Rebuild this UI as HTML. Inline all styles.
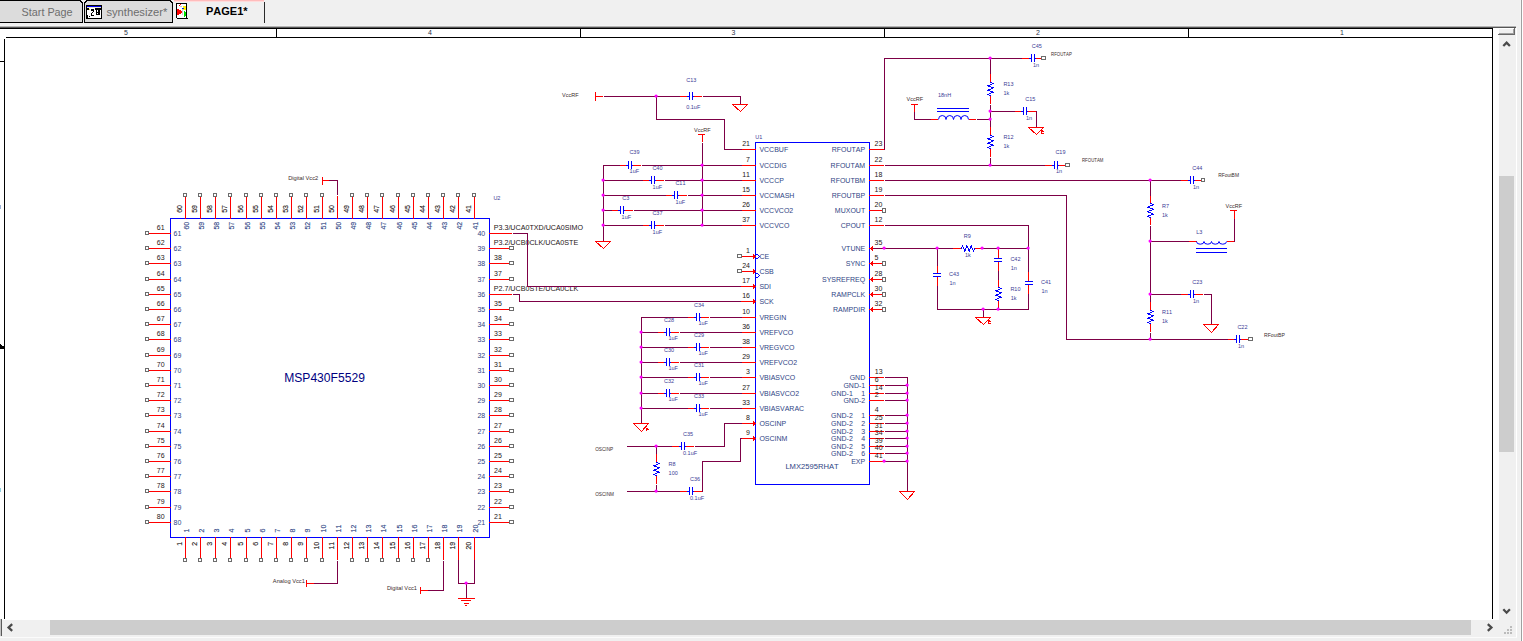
<!DOCTYPE html>
<html><head><meta charset="utf-8"><title>PAGE1</title>
<style>
html,body{margin:0;padding:0;background:#f0f0f0;overflow:hidden}
svg{display:block;font-family:"Liberation Sans",sans-serif;font-kerning:none}
#s path,#s rect{shape-rendering:crispEdges}
text{white-space:pre}
</style></head>
<body>
<svg width="1523" height="641" viewBox="0 0 1523 641">
<rect width="1523" height="641" fill="#f0f0f0"/>
<g id="c" shape-rendering="crispEdges">
<rect x="0" y="28" width="1499" height="592" fill="#fff"/>
<rect x="0" y="25" width="1516" height="1" fill="#f4f4f4"/>
<rect x="0" y="26" width="1516" height="1" fill="#b4b4b4"/>
<rect x="0" y="27" width="1516" height="1" fill="#555"/>
<rect x="0" y="28" width="1493" height="1" fill="#000"/>
<rect x="6" y="37" width="1487" height="1" fill="#000"/>
<rect x="1492" y="28" width="1" height="591" fill="#000"/>
<rect x="4" y="39" width="1" height="580" fill="#000"/>
<rect x="276" y="28" width="1" height="9" fill="#000"/>
<rect x="580" y="28" width="1" height="9" fill="#000"/>
<rect x="884" y="28" width="1" height="9" fill="#000"/>
<rect x="1188" y="28" width="1" height="9" fill="#000"/>
<text x="126" y="35.2" font-size="7" fill="#2c3448" text-anchor="middle">5</text>
<text x="430" y="35.2" font-size="7" fill="#2c3448" text-anchor="middle">4</text>
<text x="733.5" y="35.2" font-size="7" fill="#2c3448" text-anchor="middle">3</text>
<text x="1038" y="35.2" font-size="7" fill="#2c3448" text-anchor="middle">2</text>
<text x="1342" y="35.2" font-size="7" fill="#2c3448" text-anchor="middle">1</text>
<rect x="0" y="61" width="4" height="1" fill="#000"/>
<path d="M0 344h1v1h1v1h2v3h-4z" fill="#000"/>
<rect x="0" y="205" width="1" height="4" fill="#9fb4d8"/>
<rect x="0" y="488" width="1" height="4" fill="#8fd0e0"/>
<path d="M0 .5H80L82.5 3V22.5H0" fill="#dcdcdc" stroke="#000"/>
<path d="M87 .5H170L172.5 3V22.5H84.5V3z" fill="#dcdcdc" stroke="#000"/>
<rect x="174" y="0" width="90" height="1" fill="#ffbcbc"/>
<rect x="174" y="1" width="90" height="1" fill="#ffdcdc"/>
<rect x="264" y="2" width="1" height="21" fill="#2a2a2a"/>
<text x="21.6" y="16" font-size="10.8" fill="#6e6e6e">Start Page</text>
<text x="106.4" y="16" font-size="11.2" fill="#6e6e6e">synthesizer*</text>
<text x="206" y="15.4" font-size="11" font-weight="bold" fill="#000">PAGE1*</text>
<rect x="86" y="5" width="16" height="14" fill="#000"/>
<rect x="87" y="6" width="14" height="1" fill="#0000f0"/>
<rect x="87" y="7" width="14" height="1" fill="#e8e8d8"/>
<rect x="87" y="8" width="14" height="10" fill="#fff"/>
<path d="M87 8h2v2h-2zM91 9h3v3h-1v1h-1v2h2v1h-3v-3h1v-1h1v-1h-2zM95 8h6v2h-1v5h-4v-5h-1zM89 16h1v1h-1zM87 15h1v3h-1z" fill="#000"/>
<rect x="97" y="10" width="1" height="2" fill="#fff"/>
<rect x="97" y="13" width="1" height="1" fill="#fff"/>
<rect x="89" y="9" width="1" height="1" fill="#f0e000"/>
<rect x="176" y="3" width="11" height="15" fill="#000"/>
<rect x="177" y="4" width="9" height="14" fill="#fff"/>
<rect x="177" y="18" width="11" height="1" fill="#000"/>
<path d="M177 9h2v1h2v1h1v2h-1v1h-2v1h-2z" fill="#ff0000"/>
<rect x="180" y="4" width="1" height="1" fill="#ff0000"/>
<rect x="179" y="5" width="1" height="1" fill="#ff0000"/>
<rect x="180" y="6" width="2" height="1" fill="#c8c8c8"/>
<rect x="182" y="9" width="1" height="6" fill="#d0d0d0"/>
<rect x="183" y="6" width="3" height="4" fill="#ffee00"/>
<rect x="182" y="8" width="2" height="1" fill="#0020ff"/>
<path d="M184 11h1v1h1v4h-1v1h-1z" fill="#00e000"/>
<rect x="1499" y="36" width="17" height="584" fill="#f0f0f0"/>
<rect x="1516" y="28" width="1" height="610" fill="#fff"/>
<rect x="1522" y="0" width="1" height="641" fill="#fff"/>
<rect x="1499" y="176" width="15" height="276" fill="#cdcdcd"/>
<rect x="1521" y="0" width="1" height="641" fill="#a0a0a0"/>
<rect x="1520" y="0" width="1" height="641" fill="#f5f5f5"/>
<rect x="1498" y="28" width="17" height="7" fill="#f0f0f0"/>
<rect x="1498" y="28" width="16" height="1" fill="#fff"/>
<rect x="1498" y="28" width="1" height="6" fill="#fff"/>
<rect x="1499" y="33" width="15" height="1" fill="#a0a0a0"/>
<rect x="1513" y="29" width="1" height="5" fill="#a0a0a0"/>
<rect x="1498" y="34" width="17" height="1" fill="#696969"/>
<rect x="1514" y="28" width="1" height="7" fill="#696969"/>
<path d="M1503.3 46L1506.6 42.6L1509.9 46" fill="none" stroke="#4a4a4a" stroke-width="2.3" style="shape-rendering:auto"/>
<path d="M1503.3 609.3L1506.6 612.7L1509.9 609.3" fill="none" stroke="#4a4a4a" stroke-width="2.3" style="shape-rendering:auto"/>
<rect x="0" y="620" width="1499" height="17" fill="#f0f0f0"/>
<rect x="50" y="620" width="1421" height="15" fill="#cdcdcd"/>
<rect x="0" y="619" width="1" height="17" fill="#c4c4c4"/>
<rect x="1" y="619" width="1" height="17" fill="#5a5a5a"/>
<path d="M12.2 624.2L8.6 627.5L12.2 630.8" fill="none" stroke="#4a4a4a" stroke-width="2.3" style="shape-rendering:auto"/>
<path d="M1487.8 624.2L1491.4 627.5L1487.8 630.8" fill="none" stroke="#4a4a4a" stroke-width="2.3" style="shape-rendering:auto"/>
<rect x="0" y="637" width="1517" height="1" fill="#fbfbfb"/>
<rect x="1510" y="626" width="2" height="2" fill="#bcbcbc"/>
<rect x="1510" y="629" width="2" height="2" fill="#bcbcbc"/>
<rect x="1510" y="632" width="2" height="2" fill="#bcbcbc"/>
<rect x="1507" y="629" width="2" height="2" fill="#bcbcbc"/>
<rect x="1507" y="632" width="2" height="2" fill="#bcbcbc"/>
<rect x="1504" y="632" width="2" height="2" fill="#bcbcbc"/>
</g>
<g id="s" stroke-width="1">
<rect x="170.5" y="218.5" width="319" height="319" fill="none" stroke="#0000ff"/>
<path d="M149 233.5L171 233.5" stroke="#ff0000"/>
<rect x="145.5" y="231.5" width="3" height="3" fill="#fff" stroke="#6c6c6c"/>
<text x="164.6" y="230" font-size="7" fill="#1e1616" text-anchor="end">61</text>
<text x="173.6" y="236.2" font-size="7" fill="#2f4585">61</text>
<path d="M489 233.5L512 233.5" stroke="#ff0000"/>
<text x="485.2" y="236.2" font-size="7" fill="#2f4585" text-anchor="end">40</text>
<text x="493.7" y="230" font-size="7.15" fill="#1e1616">P3.3/UCA0TXD/UCA0SIMO</text>
<path d="M149 248.5L171 248.5" stroke="#ff0000"/>
<rect x="145.5" y="246.5" width="3" height="3" fill="#fff" stroke="#6c6c6c"/>
<text x="164.6" y="245" font-size="7" fill="#1e1616" text-anchor="end">62</text>
<text x="173.6" y="251.2" font-size="7" fill="#2f4585">62</text>
<path d="M489 248.5L509 248.5" stroke="#ff0000"/>
<rect x="509.5" y="246.5" width="4" height="3" fill="#fff" stroke="#6c6c6c"/>
<text x="485.2" y="251.2" font-size="7" fill="#2f4585" text-anchor="end">39</text>
<text x="493.7" y="245" font-size="7.15" fill="#1e1616">P3.2/UCB0CLK/UCA0STE</text>
<path d="M149 263.5L171 263.5" stroke="#ff0000"/>
<rect x="145.5" y="261.5" width="3" height="3" fill="#fff" stroke="#6c6c6c"/>
<text x="164.6" y="260" font-size="7" fill="#1e1616" text-anchor="end">63</text>
<text x="173.6" y="266.2" font-size="7" fill="#2f4585">63</text>
<path d="M489 263.5L509 263.5" stroke="#ff0000"/>
<rect x="509.5" y="261.5" width="4" height="3" fill="#fff" stroke="#6c6c6c"/>
<text x="485.2" y="266.2" font-size="7" fill="#2f4585" text-anchor="end">38</text>
<text x="494" y="260" font-size="7" fill="#1e1616">38</text>
<path d="M149 279.5L171 279.5" stroke="#ff0000"/>
<rect x="145.5" y="277.5" width="3" height="3" fill="#fff" stroke="#6c6c6c"/>
<text x="164.6" y="276" font-size="7" fill="#1e1616" text-anchor="end">64</text>
<text x="173.6" y="282.2" font-size="7" fill="#2f4585">64</text>
<path d="M489 279.5L509 279.5" stroke="#ff0000"/>
<rect x="509.5" y="277.5" width="4" height="3" fill="#fff" stroke="#6c6c6c"/>
<text x="485.2" y="282.2" font-size="7" fill="#2f4585" text-anchor="end">37</text>
<text x="494" y="276" font-size="7" fill="#1e1616">37</text>
<path d="M149 294.5L171 294.5" stroke="#ff0000"/>
<rect x="145.5" y="292.5" width="3" height="3" fill="#fff" stroke="#6c6c6c"/>
<text x="164.6" y="291" font-size="7" fill="#1e1616" text-anchor="end">65</text>
<text x="173.6" y="297.2" font-size="7" fill="#2f4585">65</text>
<path d="M489 294.5L512 294.5" stroke="#ff0000"/>
<text x="485.2" y="297.2" font-size="7" fill="#2f4585" text-anchor="end">36</text>
<text x="493.7" y="291" font-size="7.15" fill="#1e1616">P2.7/UCB0STE/UCA0CLK</text>
<path d="M149 309.5L171 309.5" stroke="#ff0000"/>
<rect x="145.5" y="307.5" width="3" height="3" fill="#fff" stroke="#6c6c6c"/>
<text x="164.6" y="306" font-size="7" fill="#1e1616" text-anchor="end">66</text>
<text x="173.6" y="312.2" font-size="7" fill="#2f4585">66</text>
<path d="M489 309.5L509 309.5" stroke="#ff0000"/>
<rect x="509.5" y="307.5" width="4" height="3" fill="#fff" stroke="#6c6c6c"/>
<text x="485.2" y="312.2" font-size="7" fill="#2f4585" text-anchor="end">35</text>
<text x="494" y="306" font-size="7" fill="#1e1616">35</text>
<path d="M149 324.5L171 324.5" stroke="#ff0000"/>
<rect x="145.5" y="322.5" width="3" height="3" fill="#fff" stroke="#6c6c6c"/>
<text x="164.6" y="321" font-size="7" fill="#1e1616" text-anchor="end">67</text>
<text x="173.6" y="327.2" font-size="7" fill="#2f4585">67</text>
<path d="M489 324.5L509 324.5" stroke="#ff0000"/>
<rect x="509.5" y="322.5" width="4" height="3" fill="#fff" stroke="#6c6c6c"/>
<text x="485.2" y="327.2" font-size="7" fill="#2f4585" text-anchor="end">34</text>
<text x="494" y="321" font-size="7" fill="#1e1616">34</text>
<path d="M149 339.5L171 339.5" stroke="#ff0000"/>
<rect x="145.5" y="337.5" width="3" height="3" fill="#fff" stroke="#6c6c6c"/>
<text x="164.6" y="336" font-size="7" fill="#1e1616" text-anchor="end">68</text>
<text x="173.6" y="342.2" font-size="7" fill="#2f4585">68</text>
<path d="M489 339.5L509 339.5" stroke="#ff0000"/>
<rect x="509.5" y="337.5" width="4" height="3" fill="#fff" stroke="#6c6c6c"/>
<text x="485.2" y="342.2" font-size="7" fill="#2f4585" text-anchor="end">33</text>
<text x="494" y="336" font-size="7" fill="#1e1616">33</text>
<path d="M149 355.5L171 355.5" stroke="#ff0000"/>
<rect x="145.5" y="353.5" width="3" height="3" fill="#fff" stroke="#6c6c6c"/>
<text x="164.6" y="352" font-size="7" fill="#1e1616" text-anchor="end">69</text>
<text x="173.6" y="358.2" font-size="7" fill="#2f4585">69</text>
<path d="M489 355.5L509 355.5" stroke="#ff0000"/>
<rect x="509.5" y="353.5" width="4" height="3" fill="#fff" stroke="#6c6c6c"/>
<text x="485.2" y="358.2" font-size="7" fill="#2f4585" text-anchor="end">32</text>
<text x="494" y="352" font-size="7" fill="#1e1616">32</text>
<path d="M149 370.5L171 370.5" stroke="#ff0000"/>
<rect x="145.5" y="368.5" width="3" height="3" fill="#fff" stroke="#6c6c6c"/>
<text x="164.6" y="367" font-size="7" fill="#1e1616" text-anchor="end">70</text>
<text x="173.6" y="373.2" font-size="7" fill="#2f4585">70</text>
<path d="M489 370.5L509 370.5" stroke="#ff0000"/>
<rect x="509.5" y="368.5" width="4" height="3" fill="#fff" stroke="#6c6c6c"/>
<text x="485.2" y="373.2" font-size="7" fill="#2f4585" text-anchor="end">31</text>
<text x="494" y="367" font-size="7" fill="#1e1616">31</text>
<path d="M149 385.5L171 385.5" stroke="#ff0000"/>
<rect x="145.5" y="383.5" width="3" height="3" fill="#fff" stroke="#6c6c6c"/>
<text x="164.6" y="382" font-size="7" fill="#1e1616" text-anchor="end">71</text>
<text x="173.6" y="388.2" font-size="7" fill="#2f4585">71</text>
<path d="M489 385.5L509 385.5" stroke="#ff0000"/>
<rect x="509.5" y="383.5" width="4" height="3" fill="#fff" stroke="#6c6c6c"/>
<text x="485.2" y="388.2" font-size="7" fill="#2f4585" text-anchor="end">30</text>
<text x="494" y="382" font-size="7" fill="#1e1616">30</text>
<path d="M149 400.5L171 400.5" stroke="#ff0000"/>
<rect x="145.5" y="398.5" width="3" height="3" fill="#fff" stroke="#6c6c6c"/>
<text x="164.6" y="397" font-size="7" fill="#1e1616" text-anchor="end">72</text>
<text x="173.6" y="403.2" font-size="7" fill="#2f4585">72</text>
<path d="M489 400.5L509 400.5" stroke="#ff0000"/>
<rect x="509.5" y="398.5" width="4" height="3" fill="#fff" stroke="#6c6c6c"/>
<text x="485.2" y="403.2" font-size="7" fill="#2f4585" text-anchor="end">29</text>
<text x="494" y="397" font-size="7" fill="#1e1616">29</text>
<path d="M149 415.5L171 415.5" stroke="#ff0000"/>
<rect x="145.5" y="413.5" width="3" height="3" fill="#fff" stroke="#6c6c6c"/>
<text x="164.6" y="412" font-size="7" fill="#1e1616" text-anchor="end">73</text>
<text x="173.6" y="418.2" font-size="7" fill="#2f4585">73</text>
<path d="M489 415.5L509 415.5" stroke="#ff0000"/>
<rect x="509.5" y="413.5" width="4" height="3" fill="#fff" stroke="#6c6c6c"/>
<text x="485.2" y="418.2" font-size="7" fill="#2f4585" text-anchor="end">28</text>
<text x="494" y="412" font-size="7" fill="#1e1616">28</text>
<path d="M149 431.5L171 431.5" stroke="#ff0000"/>
<rect x="145.5" y="429.5" width="3" height="3" fill="#fff" stroke="#6c6c6c"/>
<text x="164.6" y="428" font-size="7" fill="#1e1616" text-anchor="end">74</text>
<text x="173.6" y="434.2" font-size="7" fill="#2f4585">74</text>
<path d="M489 431.5L509 431.5" stroke="#ff0000"/>
<rect x="509.5" y="429.5" width="4" height="3" fill="#fff" stroke="#6c6c6c"/>
<text x="485.2" y="434.2" font-size="7" fill="#2f4585" text-anchor="end">27</text>
<text x="494" y="428" font-size="7" fill="#1e1616">27</text>
<path d="M149 446.5L171 446.5" stroke="#ff0000"/>
<rect x="145.5" y="444.5" width="3" height="3" fill="#fff" stroke="#6c6c6c"/>
<text x="164.6" y="443" font-size="7" fill="#1e1616" text-anchor="end">75</text>
<text x="173.6" y="449.2" font-size="7" fill="#2f4585">75</text>
<path d="M489 446.5L509 446.5" stroke="#ff0000"/>
<rect x="509.5" y="444.5" width="4" height="3" fill="#fff" stroke="#6c6c6c"/>
<text x="485.2" y="449.2" font-size="7" fill="#2f4585" text-anchor="end">26</text>
<text x="494" y="443" font-size="7" fill="#1e1616">26</text>
<path d="M149 461.5L171 461.5" stroke="#ff0000"/>
<rect x="145.5" y="459.5" width="3" height="3" fill="#fff" stroke="#6c6c6c"/>
<text x="164.6" y="458" font-size="7" fill="#1e1616" text-anchor="end">76</text>
<text x="173.6" y="464.2" font-size="7" fill="#2f4585">76</text>
<path d="M489 461.5L509 461.5" stroke="#ff0000"/>
<rect x="509.5" y="459.5" width="4" height="3" fill="#fff" stroke="#6c6c6c"/>
<text x="485.2" y="464.2" font-size="7" fill="#2f4585" text-anchor="end">25</text>
<text x="494" y="458" font-size="7" fill="#1e1616">25</text>
<path d="M149 476.5L171 476.5" stroke="#ff0000"/>
<rect x="145.5" y="474.5" width="3" height="3" fill="#fff" stroke="#6c6c6c"/>
<text x="164.6" y="473" font-size="7" fill="#1e1616" text-anchor="end">77</text>
<text x="173.6" y="479.2" font-size="7" fill="#2f4585">77</text>
<path d="M489 476.5L509 476.5" stroke="#ff0000"/>
<rect x="509.5" y="474.5" width="4" height="3" fill="#fff" stroke="#6c6c6c"/>
<text x="485.2" y="479.2" font-size="7" fill="#2f4585" text-anchor="end">24</text>
<text x="494" y="473" font-size="7" fill="#1e1616">24</text>
<path d="M149 491.5L171 491.5" stroke="#ff0000"/>
<rect x="145.5" y="489.5" width="3" height="3" fill="#fff" stroke="#6c6c6c"/>
<text x="164.6" y="488" font-size="7" fill="#1e1616" text-anchor="end">78</text>
<text x="173.6" y="494.2" font-size="7" fill="#2f4585">78</text>
<path d="M489 491.5L509 491.5" stroke="#ff0000"/>
<rect x="509.5" y="489.5" width="4" height="3" fill="#fff" stroke="#6c6c6c"/>
<text x="485.2" y="494.2" font-size="7" fill="#2f4585" text-anchor="end">23</text>
<text x="494" y="488" font-size="7" fill="#1e1616">23</text>
<path d="M149 507.5L171 507.5" stroke="#ff0000"/>
<rect x="145.5" y="505.5" width="3" height="3" fill="#fff" stroke="#6c6c6c"/>
<text x="164.6" y="504" font-size="7" fill="#1e1616" text-anchor="end">79</text>
<text x="173.6" y="510.2" font-size="7" fill="#2f4585">79</text>
<path d="M489 507.5L509 507.5" stroke="#ff0000"/>
<rect x="509.5" y="505.5" width="4" height="3" fill="#fff" stroke="#6c6c6c"/>
<text x="485.2" y="510.2" font-size="7" fill="#2f4585" text-anchor="end">22</text>
<text x="494" y="504" font-size="7" fill="#1e1616">22</text>
<path d="M149 522.5L171 522.5" stroke="#ff0000"/>
<rect x="145.5" y="520.5" width="3" height="3" fill="#fff" stroke="#6c6c6c"/>
<text x="164.6" y="519" font-size="7" fill="#1e1616" text-anchor="end">80</text>
<text x="173.6" y="525.2" font-size="7" fill="#2f4585">80</text>
<path d="M489 522.5L509 522.5" stroke="#ff0000"/>
<rect x="509.5" y="520.5" width="4" height="3" fill="#fff" stroke="#6c6c6c"/>
<text x="485.2" y="525.2" font-size="7" fill="#2f4585" text-anchor="end">21</text>
<text x="494" y="519" font-size="7" fill="#1e1616">21</text>
<path d="M185.5 197L185.5 219" stroke="#ff0000"/>
<rect x="183.5" y="193.5" width="3" height="3" fill="#fff" stroke="#6c6c6c"/>
<text x="181.8" y="212.8" font-size="7" fill="#1e1616" transform="rotate(-90 181.8 212.8)" stroke="#1e1616" stroke-width=".12">60</text>
<text x="188.6" y="229.6" font-size="7" fill="#2f4585" transform="rotate(-90 188.6 229.6)" stroke="#2f4585" stroke-width=".12">60</text>
<path d="M185.5 537L185.5 558" stroke="#ff0000"/>
<rect x="183.5" y="558.5" width="3" height="3" fill="#fff" stroke="#6c6c6c"/>
<text x="181.8" y="541.8" font-size="7" fill="#1e1616" text-anchor="end" transform="rotate(-90 181.8 541.8)" stroke="#1e1616" stroke-width=".12">1</text>
<text x="188.6" y="532.4" font-size="7" fill="#2f4585" transform="rotate(-90 188.6 532.4)" stroke="#2f4585" stroke-width=".12">1</text>
<path d="M200.5 197L200.5 219" stroke="#ff0000"/>
<rect x="198.5" y="193.5" width="3" height="3" fill="#fff" stroke="#6c6c6c"/>
<text x="196.8" y="212.8" font-size="7" fill="#1e1616" transform="rotate(-90 196.8 212.8)" stroke="#1e1616" stroke-width=".12">59</text>
<text x="203.6" y="229.6" font-size="7" fill="#2f4585" transform="rotate(-90 203.6 229.6)" stroke="#2f4585" stroke-width=".12">59</text>
<path d="M200.5 537L200.5 558" stroke="#ff0000"/>
<rect x="198.5" y="558.5" width="3" height="3" fill="#fff" stroke="#6c6c6c"/>
<text x="196.8" y="541.8" font-size="7" fill="#1e1616" text-anchor="end" transform="rotate(-90 196.8 541.8)" stroke="#1e1616" stroke-width=".12">2</text>
<text x="203.6" y="532.4" font-size="7" fill="#2f4585" transform="rotate(-90 203.6 532.4)" stroke="#2f4585" stroke-width=".12">2</text>
<path d="M215.5 197L215.5 219" stroke="#ff0000"/>
<rect x="213.5" y="193.5" width="3" height="3" fill="#fff" stroke="#6c6c6c"/>
<text x="211.8" y="212.8" font-size="7" fill="#1e1616" transform="rotate(-90 211.8 212.8)" stroke="#1e1616" stroke-width=".12">58</text>
<text x="218.6" y="229.6" font-size="7" fill="#2f4585" transform="rotate(-90 218.6 229.6)" stroke="#2f4585" stroke-width=".12">58</text>
<path d="M215.5 537L215.5 558" stroke="#ff0000"/>
<rect x="213.5" y="558.5" width="3" height="3" fill="#fff" stroke="#6c6c6c"/>
<text x="211.8" y="541.8" font-size="7" fill="#1e1616" text-anchor="end" transform="rotate(-90 211.8 541.8)" stroke="#1e1616" stroke-width=".12">3</text>
<text x="218.6" y="532.4" font-size="7" fill="#2f4585" transform="rotate(-90 218.6 532.4)" stroke="#2f4585" stroke-width=".12">3</text>
<path d="M230.5 197L230.5 219" stroke="#ff0000"/>
<rect x="228.5" y="193.5" width="3" height="3" fill="#fff" stroke="#6c6c6c"/>
<text x="226.8" y="212.8" font-size="7" fill="#1e1616" transform="rotate(-90 226.8 212.8)" stroke="#1e1616" stroke-width=".12">57</text>
<text x="233.6" y="229.6" font-size="7" fill="#2f4585" transform="rotate(-90 233.6 229.6)" stroke="#2f4585" stroke-width=".12">57</text>
<path d="M230.5 537L230.5 558" stroke="#ff0000"/>
<rect x="228.5" y="558.5" width="3" height="3" fill="#fff" stroke="#6c6c6c"/>
<text x="226.8" y="541.8" font-size="7" fill="#1e1616" text-anchor="end" transform="rotate(-90 226.8 541.8)" stroke="#1e1616" stroke-width=".12">4</text>
<text x="233.6" y="532.4" font-size="7" fill="#2f4585" transform="rotate(-90 233.6 532.4)" stroke="#2f4585" stroke-width=".12">4</text>
<path d="M246.5 197L246.5 219" stroke="#ff0000"/>
<rect x="244.5" y="193.5" width="3" height="3" fill="#fff" stroke="#6c6c6c"/>
<text x="242.8" y="212.8" font-size="7" fill="#1e1616" transform="rotate(-90 242.8 212.8)" stroke="#1e1616" stroke-width=".12">56</text>
<text x="249.6" y="229.6" font-size="7" fill="#2f4585" transform="rotate(-90 249.6 229.6)" stroke="#2f4585" stroke-width=".12">56</text>
<path d="M246.5 537L246.5 558" stroke="#ff0000"/>
<rect x="244.5" y="558.5" width="3" height="3" fill="#fff" stroke="#6c6c6c"/>
<text x="242.8" y="541.8" font-size="7" fill="#1e1616" text-anchor="end" transform="rotate(-90 242.8 541.8)" stroke="#1e1616" stroke-width=".12">5</text>
<text x="249.6" y="532.4" font-size="7" fill="#2f4585" transform="rotate(-90 249.6 532.4)" stroke="#2f4585" stroke-width=".12">5</text>
<path d="M261.5 197L261.5 219" stroke="#ff0000"/>
<rect x="259.5" y="193.5" width="3" height="3" fill="#fff" stroke="#6c6c6c"/>
<text x="257.8" y="212.8" font-size="7" fill="#1e1616" transform="rotate(-90 257.8 212.8)" stroke="#1e1616" stroke-width=".12">55</text>
<text x="264.6" y="229.6" font-size="7" fill="#2f4585" transform="rotate(-90 264.6 229.6)" stroke="#2f4585" stroke-width=".12">55</text>
<path d="M261.5 537L261.5 558" stroke="#ff0000"/>
<rect x="259.5" y="558.5" width="3" height="3" fill="#fff" stroke="#6c6c6c"/>
<text x="257.8" y="541.8" font-size="7" fill="#1e1616" text-anchor="end" transform="rotate(-90 257.8 541.8)" stroke="#1e1616" stroke-width=".12">6</text>
<text x="264.6" y="532.4" font-size="7" fill="#2f4585" transform="rotate(-90 264.6 532.4)" stroke="#2f4585" stroke-width=".12">6</text>
<path d="M276.5 197L276.5 219" stroke="#ff0000"/>
<rect x="274.5" y="193.5" width="3" height="3" fill="#fff" stroke="#6c6c6c"/>
<text x="272.8" y="212.8" font-size="7" fill="#1e1616" transform="rotate(-90 272.8 212.8)" stroke="#1e1616" stroke-width=".12">54</text>
<text x="279.6" y="229.6" font-size="7" fill="#2f4585" transform="rotate(-90 279.6 229.6)" stroke="#2f4585" stroke-width=".12">54</text>
<path d="M276.5 537L276.5 558" stroke="#ff0000"/>
<rect x="274.5" y="558.5" width="3" height="3" fill="#fff" stroke="#6c6c6c"/>
<text x="272.8" y="541.8" font-size="7" fill="#1e1616" text-anchor="end" transform="rotate(-90 272.8 541.8)" stroke="#1e1616" stroke-width=".12">7</text>
<text x="279.6" y="532.4" font-size="7" fill="#2f4585" transform="rotate(-90 279.6 532.4)" stroke="#2f4585" stroke-width=".12">7</text>
<path d="M291.5 197L291.5 219" stroke="#ff0000"/>
<rect x="289.5" y="193.5" width="3" height="3" fill="#fff" stroke="#6c6c6c"/>
<text x="287.8" y="212.8" font-size="7" fill="#1e1616" transform="rotate(-90 287.8 212.8)" stroke="#1e1616" stroke-width=".12">53</text>
<text x="294.6" y="229.6" font-size="7" fill="#2f4585" transform="rotate(-90 294.6 229.6)" stroke="#2f4585" stroke-width=".12">53</text>
<path d="M291.5 537L291.5 558" stroke="#ff0000"/>
<rect x="289.5" y="558.5" width="3" height="3" fill="#fff" stroke="#6c6c6c"/>
<text x="287.8" y="541.8" font-size="7" fill="#1e1616" text-anchor="end" transform="rotate(-90 287.8 541.8)" stroke="#1e1616" stroke-width=".12">8</text>
<text x="294.6" y="532.4" font-size="7" fill="#2f4585" transform="rotate(-90 294.6 532.4)" stroke="#2f4585" stroke-width=".12">8</text>
<path d="M306.5 197L306.5 219" stroke="#ff0000"/>
<rect x="304.5" y="193.5" width="3" height="3" fill="#fff" stroke="#6c6c6c"/>
<text x="302.8" y="212.8" font-size="7" fill="#1e1616" transform="rotate(-90 302.8 212.8)" stroke="#1e1616" stroke-width=".12">52</text>
<text x="309.6" y="229.6" font-size="7" fill="#2f4585" transform="rotate(-90 309.6 229.6)" stroke="#2f4585" stroke-width=".12">52</text>
<path d="M306.5 537L306.5 558" stroke="#ff0000"/>
<rect x="304.5" y="558.5" width="3" height="3" fill="#fff" stroke="#6c6c6c"/>
<text x="302.8" y="541.8" font-size="7" fill="#1e1616" text-anchor="end" transform="rotate(-90 302.8 541.8)" stroke="#1e1616" stroke-width=".12">9</text>
<text x="309.6" y="532.4" font-size="7" fill="#2f4585" transform="rotate(-90 309.6 532.4)" stroke="#2f4585" stroke-width=".12">9</text>
<path d="M322.5 197L322.5 219" stroke="#ff0000"/>
<rect x="320.5" y="193.5" width="3" height="3" fill="#fff" stroke="#6c6c6c"/>
<text x="318.8" y="212.8" font-size="7" fill="#1e1616" transform="rotate(-90 318.8 212.8)" stroke="#1e1616" stroke-width=".12">51</text>
<text x="325.6" y="229.6" font-size="7" fill="#2f4585" transform="rotate(-90 325.6 229.6)" stroke="#2f4585" stroke-width=".12">51</text>
<path d="M322.5 537L322.5 558" stroke="#ff0000"/>
<rect x="320.5" y="558.5" width="3" height="3" fill="#fff" stroke="#6c6c6c"/>
<text x="318.8" y="541.8" font-size="7" fill="#1e1616" text-anchor="end" transform="rotate(-90 318.8 541.8)" stroke="#1e1616" stroke-width=".12">10</text>
<text x="325.6" y="532.4" font-size="7" fill="#2f4585" transform="rotate(-90 325.6 532.4)" stroke="#2f4585" stroke-width=".12">10</text>
<path d="M337.5 196L337.5 219" stroke="#ff0000"/>
<text x="333.8" y="212.8" font-size="7" fill="#1e1616" transform="rotate(-90 333.8 212.8)" stroke="#1e1616" stroke-width=".12">50</text>
<text x="340.6" y="229.6" font-size="7" fill="#2f4585" transform="rotate(-90 340.6 229.6)" stroke="#2f4585" stroke-width=".12">50</text>
<path d="M337.5 537L337.5 560" stroke="#ff0000"/>
<text x="333.8" y="541.8" font-size="7" fill="#1e1616" text-anchor="end" transform="rotate(-90 333.8 541.8)" stroke="#1e1616" stroke-width=".12">11</text>
<text x="340.6" y="532.4" font-size="7" fill="#2f4585" transform="rotate(-90 340.6 532.4)" stroke="#2f4585" stroke-width=".12">11</text>
<path d="M352.5 197L352.5 219" stroke="#ff0000"/>
<rect x="350.5" y="193.5" width="3" height="3" fill="#fff" stroke="#6c6c6c"/>
<text x="348.8" y="212.8" font-size="7" fill="#1e1616" transform="rotate(-90 348.8 212.8)" stroke="#1e1616" stroke-width=".12">49</text>
<text x="355.6" y="229.6" font-size="7" fill="#2f4585" transform="rotate(-90 355.6 229.6)" stroke="#2f4585" stroke-width=".12">49</text>
<path d="M352.5 537L352.5 558" stroke="#ff0000"/>
<rect x="350.5" y="558.5" width="3" height="3" fill="#fff" stroke="#6c6c6c"/>
<text x="348.8" y="541.8" font-size="7" fill="#1e1616" text-anchor="end" transform="rotate(-90 348.8 541.8)" stroke="#1e1616" stroke-width=".12">12</text>
<text x="355.6" y="532.4" font-size="7" fill="#2f4585" transform="rotate(-90 355.6 532.4)" stroke="#2f4585" stroke-width=".12">12</text>
<path d="M367.5 197L367.5 219" stroke="#ff0000"/>
<rect x="365.5" y="193.5" width="3" height="3" fill="#fff" stroke="#6c6c6c"/>
<text x="363.8" y="212.8" font-size="7" fill="#1e1616" transform="rotate(-90 363.8 212.8)" stroke="#1e1616" stroke-width=".12">48</text>
<text x="370.6" y="229.6" font-size="7" fill="#2f4585" transform="rotate(-90 370.6 229.6)" stroke="#2f4585" stroke-width=".12">48</text>
<path d="M367.5 537L367.5 558" stroke="#ff0000"/>
<rect x="365.5" y="558.5" width="3" height="3" fill="#fff" stroke="#6c6c6c"/>
<text x="363.8" y="541.8" font-size="7" fill="#1e1616" text-anchor="end" transform="rotate(-90 363.8 541.8)" stroke="#1e1616" stroke-width=".12">13</text>
<text x="370.6" y="532.4" font-size="7" fill="#2f4585" transform="rotate(-90 370.6 532.4)" stroke="#2f4585" stroke-width=".12">13</text>
<path d="M382.5 197L382.5 219" stroke="#ff0000"/>
<rect x="380.5" y="193.5" width="3" height="3" fill="#fff" stroke="#6c6c6c"/>
<text x="378.8" y="212.8" font-size="7" fill="#1e1616" transform="rotate(-90 378.8 212.8)" stroke="#1e1616" stroke-width=".12">47</text>
<text x="385.6" y="229.6" font-size="7" fill="#2f4585" transform="rotate(-90 385.6 229.6)" stroke="#2f4585" stroke-width=".12">47</text>
<path d="M382.5 537L382.5 558" stroke="#ff0000"/>
<rect x="380.5" y="558.5" width="3" height="3" fill="#fff" stroke="#6c6c6c"/>
<text x="378.8" y="541.8" font-size="7" fill="#1e1616" text-anchor="end" transform="rotate(-90 378.8 541.8)" stroke="#1e1616" stroke-width=".12">14</text>
<text x="385.6" y="532.4" font-size="7" fill="#2f4585" transform="rotate(-90 385.6 532.4)" stroke="#2f4585" stroke-width=".12">14</text>
<path d="M398.5 197L398.5 219" stroke="#ff0000"/>
<rect x="396.5" y="193.5" width="3" height="3" fill="#fff" stroke="#6c6c6c"/>
<text x="394.8" y="212.8" font-size="7" fill="#1e1616" transform="rotate(-90 394.8 212.8)" stroke="#1e1616" stroke-width=".12">46</text>
<text x="401.6" y="229.6" font-size="7" fill="#2f4585" transform="rotate(-90 401.6 229.6)" stroke="#2f4585" stroke-width=".12">46</text>
<path d="M398.5 537L398.5 558" stroke="#ff0000"/>
<rect x="396.5" y="558.5" width="3" height="3" fill="#fff" stroke="#6c6c6c"/>
<text x="394.8" y="541.8" font-size="7" fill="#1e1616" text-anchor="end" transform="rotate(-90 394.8 541.8)" stroke="#1e1616" stroke-width=".12">15</text>
<text x="401.6" y="532.4" font-size="7" fill="#2f4585" transform="rotate(-90 401.6 532.4)" stroke="#2f4585" stroke-width=".12">15</text>
<path d="M413.5 197L413.5 219" stroke="#ff0000"/>
<rect x="411.5" y="193.5" width="3" height="3" fill="#fff" stroke="#6c6c6c"/>
<text x="409.8" y="212.8" font-size="7" fill="#1e1616" transform="rotate(-90 409.8 212.8)" stroke="#1e1616" stroke-width=".12">45</text>
<text x="416.6" y="229.6" font-size="7" fill="#2f4585" transform="rotate(-90 416.6 229.6)" stroke="#2f4585" stroke-width=".12">45</text>
<path d="M413.5 537L413.5 558" stroke="#ff0000"/>
<rect x="411.5" y="558.5" width="3" height="3" fill="#fff" stroke="#6c6c6c"/>
<text x="409.8" y="541.8" font-size="7" fill="#1e1616" text-anchor="end" transform="rotate(-90 409.8 541.8)" stroke="#1e1616" stroke-width=".12">16</text>
<text x="416.6" y="532.4" font-size="7" fill="#2f4585" transform="rotate(-90 416.6 532.4)" stroke="#2f4585" stroke-width=".12">16</text>
<path d="M428.5 197L428.5 219" stroke="#ff0000"/>
<rect x="426.5" y="193.5" width="3" height="3" fill="#fff" stroke="#6c6c6c"/>
<text x="424.8" y="212.8" font-size="7" fill="#1e1616" transform="rotate(-90 424.8 212.8)" stroke="#1e1616" stroke-width=".12">44</text>
<text x="431.6" y="229.6" font-size="7" fill="#2f4585" transform="rotate(-90 431.6 229.6)" stroke="#2f4585" stroke-width=".12">44</text>
<path d="M428.5 537L428.5 558" stroke="#ff0000"/>
<rect x="426.5" y="558.5" width="3" height="3" fill="#fff" stroke="#6c6c6c"/>
<text x="424.8" y="541.8" font-size="7" fill="#1e1616" text-anchor="end" transform="rotate(-90 424.8 541.8)" stroke="#1e1616" stroke-width=".12">17</text>
<text x="431.6" y="532.4" font-size="7" fill="#2f4585" transform="rotate(-90 431.6 532.4)" stroke="#2f4585" stroke-width=".12">17</text>
<path d="M443.5 197L443.5 219" stroke="#ff0000"/>
<rect x="441.5" y="193.5" width="3" height="3" fill="#fff" stroke="#6c6c6c"/>
<text x="439.8" y="212.8" font-size="7" fill="#1e1616" transform="rotate(-90 439.8 212.8)" stroke="#1e1616" stroke-width=".12">43</text>
<text x="446.6" y="229.6" font-size="7" fill="#2f4585" transform="rotate(-90 446.6 229.6)" stroke="#2f4585" stroke-width=".12">43</text>
<path d="M443.5 537L443.5 560" stroke="#ff0000"/>
<text x="439.8" y="541.8" font-size="7" fill="#1e1616" text-anchor="end" transform="rotate(-90 439.8 541.8)" stroke="#1e1616" stroke-width=".12">18</text>
<text x="446.6" y="532.4" font-size="7" fill="#2f4585" transform="rotate(-90 446.6 532.4)" stroke="#2f4585" stroke-width=".12">18</text>
<path d="M458.5 197L458.5 219" stroke="#ff0000"/>
<rect x="456.5" y="193.5" width="3" height="3" fill="#fff" stroke="#6c6c6c"/>
<text x="454.8" y="212.8" font-size="7" fill="#1e1616" transform="rotate(-90 454.8 212.8)" stroke="#1e1616" stroke-width=".12">42</text>
<text x="461.6" y="229.6" font-size="7" fill="#2f4585" transform="rotate(-90 461.6 229.6)" stroke="#2f4585" stroke-width=".12">42</text>
<path d="M458.5 537L458.5 560" stroke="#ff0000"/>
<text x="454.8" y="541.8" font-size="7" fill="#1e1616" text-anchor="end" transform="rotate(-90 454.8 541.8)" stroke="#1e1616" stroke-width=".12">19</text>
<text x="461.6" y="532.4" font-size="7" fill="#2f4585" transform="rotate(-90 461.6 532.4)" stroke="#2f4585" stroke-width=".12">19</text>
<path d="M474.5 197L474.5 219" stroke="#ff0000"/>
<rect x="472.5" y="193.5" width="3" height="3" fill="#fff" stroke="#6c6c6c"/>
<text x="470.8" y="212.8" font-size="7" fill="#1e1616" transform="rotate(-90 470.8 212.8)" stroke="#1e1616" stroke-width=".12">41</text>
<text x="477.6" y="229.6" font-size="7" fill="#2f4585" transform="rotate(-90 477.6 229.6)" stroke="#2f4585" stroke-width=".12">41</text>
<path d="M474.5 537L474.5 560" stroke="#ff0000"/>
<text x="470.8" y="541.8" font-size="7" fill="#1e1616" text-anchor="end" transform="rotate(-90 470.8 541.8)" stroke="#1e1616" stroke-width=".12">20</text>
<text x="477.6" y="532.4" font-size="7" fill="#2f4585" transform="rotate(-90 477.6 532.4)" stroke="#2f4585" stroke-width=".12">20</text>
<text x="284.2" y="382.4" font-size="12.1" fill="#00007f">MSP430F5529</text>
<text x="493.4" y="199.7" font-size="5.5" fill="#3c3c96">U2</text>
<path d="M322.5 177L322.5 185" stroke="#ff0000"/>
<path d="M322 180.5L329 180.5" stroke="#ff0000"/>
<path d="M329 180.5L338 180.5" stroke="#7d0046"/>
<path d="M337.5 180L337.5 195" stroke="#7d0046"/>
<text x="318.2" y="179.7" font-size="5.7" fill="#3a2c2c" text-anchor="end">Digital Vcc2</text>
<path d="M337.5 561L337.5 584" stroke="#7d0046"/>
<path d="M314 583.5L338 583.5" stroke="#7d0046"/>
<path d="M307 583.5L314 583.5" stroke="#ff0000"/>
<path d="M306.5 580L306.5 587" stroke="#ff0000"/>
<text x="304.8" y="582.6" font-size="5.7" fill="#3a2c2c" text-anchor="end">Analog Vcc1</text>
<path d="M443.5 561L443.5 591" stroke="#7d0046"/>
<path d="M428 590.5L444 590.5" stroke="#7d0046"/>
<path d="M421 590.5L428 590.5" stroke="#ff0000"/>
<path d="M420.5 587L420.5 594" stroke="#ff0000"/>
<text x="417" y="590.4" font-size="5.7" fill="#3a2c2c" text-anchor="end">Digital Vcc1</text>
<path d="M458.5 560L458.5 584" stroke="#7d0046"/>
<path d="M458 583.5L475 583.5" stroke="#7d0046"/>
<path d="M474.5 560L474.5 584" stroke="#7d0046"/>
<path d="M466.5 583L466.5 598" stroke="#7d0046"/>
<path d="M458 598.5L475 598.5" stroke="#ff0000"/>
<path d="M461 600.5L471 600.5" stroke="#ff0000"/>
<path d="M464 603.5L469 603.5" stroke="#ff0000"/>
<path d="M465 605.5L467 605.5" stroke="#ff0000"/>
<path d="M513 233.5L528 233.5" stroke="#7d0046"/>
<path d="M527.5 233L527.5 287" stroke="#7d0046"/>
<path d="M527 286.5L741 286.5" stroke="#7d0046"/>
<path d="M513 294.5L520 294.5" stroke="#7d0046"/>
<path d="M519.5 294L519.5 302" stroke="#7d0046"/>
<path d="M519 301.5L741 301.5" stroke="#7d0046"/>
<rect x="755.5" y="142.5" width="114" height="342" fill="none" stroke="#0000ff"/>
<text x="755.2" y="138.6" font-size="5.5" fill="#3c3c96">U1</text>
<text x="785.4" y="469" font-size="8.1" fill="#2f4585" textLength="53.2" lengthAdjust="spacingAndGlyphs">LMX2595RHAT</text>
<path d="M741 149.5L756 149.5" stroke="#ff0000"/>
<text x="750" y="146" font-size="7" fill="#1e1616" text-anchor="end">21</text>
<text x="759.4" y="152.1" font-size="7" fill="#2f4585">VCCBUF</text>
<path d="M741 165.5L756 165.5" stroke="#ff0000"/>
<text x="750" y="162" font-size="7" fill="#1e1616" text-anchor="end">7</text>
<text x="759.4" y="168.1" font-size="7" fill="#2f4585">VCCDIG</text>
<path d="M741 180.5L756 180.5" stroke="#ff0000"/>
<text x="750" y="177" font-size="7" fill="#1e1616" text-anchor="end">11</text>
<text x="759.4" y="183.1" font-size="7" fill="#2f4585">VCCCP</text>
<path d="M741 195.5L756 195.5" stroke="#ff0000"/>
<text x="750" y="192" font-size="7" fill="#1e1616" text-anchor="end">15</text>
<text x="759.4" y="198.1" font-size="7" fill="#2f4585">VCCMASH</text>
<path d="M741 210.5L756 210.5" stroke="#ff0000"/>
<text x="750" y="207" font-size="7" fill="#1e1616" text-anchor="end">26</text>
<text x="759.4" y="213.1" font-size="7" fill="#2f4585">VCCVCO2</text>
<path d="M741 225.5L756 225.5" stroke="#ff0000"/>
<text x="750" y="222" font-size="7" fill="#1e1616" text-anchor="end">37</text>
<text x="759.4" y="228.1" font-size="7" fill="#2f4585">VCCVCO</text>
<path d="M742 256.5L756 256.5" stroke="#ff0000"/>
<text x="750" y="253" font-size="7" fill="#1e1616" text-anchor="end">1</text>
<text x="759.4" y="259.1" font-size="7" fill="#2f4585">CE</text>
<rect x="753" y="254" width="1" height="5" fill="#ff0000" stroke="none"/>
<rect x="754" y="255" width="1" height="3" fill="#ff0000" stroke="none"/>
<rect x="755" y="256" width="1" height="1" fill="#ff0000" stroke="none"/>
<rect x="737.5" y="254.5" width="4" height="3" fill="#fff" stroke="#6c6c6c"/>
<path d="M742 271.5L756 271.5" stroke="#ff0000"/>
<text x="750" y="268" font-size="7" fill="#1e1616" text-anchor="end">24</text>
<text x="759.4" y="274.1" font-size="7" fill="#2f4585">CSB</text>
<rect x="753" y="269" width="1" height="5" fill="#ff0000" stroke="none"/>
<rect x="754" y="270" width="1" height="3" fill="#ff0000" stroke="none"/>
<rect x="755" y="271" width="1" height="1" fill="#ff0000" stroke="none"/>
<rect x="737.5" y="269.5" width="4" height="3" fill="#fff" stroke="#6c6c6c"/>
<path d="M741 286.5L756 286.5" stroke="#ff0000"/>
<text x="750" y="283" font-size="7" fill="#1e1616" text-anchor="end">17</text>
<text x="759.4" y="289.1" font-size="7" fill="#2f4585">SDI</text>
<rect x="753" y="284" width="1" height="5" fill="#ff0000" stroke="none"/>
<rect x="754" y="285" width="1" height="3" fill="#ff0000" stroke="none"/>
<rect x="755" y="286" width="1" height="1" fill="#ff0000" stroke="none"/>
<path d="M741 301.5L756 301.5" stroke="#ff0000"/>
<text x="750" y="298" font-size="7" fill="#1e1616" text-anchor="end">16</text>
<text x="759.4" y="304.1" font-size="7" fill="#2f4585">SCK</text>
<rect x="753" y="299" width="1" height="5" fill="#ff0000" stroke="none"/>
<rect x="754" y="300" width="1" height="3" fill="#ff0000" stroke="none"/>
<rect x="755" y="301" width="1" height="1" fill="#ff0000" stroke="none"/>
<path d="M741 317.5L756 317.5" stroke="#ff0000"/>
<text x="750" y="314" font-size="7" fill="#1e1616" text-anchor="end">10</text>
<text x="759.4" y="320.1" font-size="7" fill="#2f4585">VREGIN</text>
<path d="M741 332.5L756 332.5" stroke="#ff0000"/>
<text x="750" y="329" font-size="7" fill="#1e1616" text-anchor="end">36</text>
<text x="759.4" y="335.1" font-size="7" fill="#2f4585">VREFVCO</text>
<path d="M741 347.5L756 347.5" stroke="#ff0000"/>
<text x="750" y="344" font-size="7" fill="#1e1616" text-anchor="end">38</text>
<text x="759.4" y="350.1" font-size="7" fill="#2f4585">VREGVCO</text>
<path d="M741 362.5L756 362.5" stroke="#ff0000"/>
<text x="750" y="359" font-size="7" fill="#1e1616" text-anchor="end">29</text>
<text x="759.4" y="365.1" font-size="7" fill="#2f4585">VREFVCO2</text>
<path d="M741 377.5L756 377.5" stroke="#ff0000"/>
<text x="750" y="374" font-size="7" fill="#1e1616" text-anchor="end">3</text>
<text x="759.4" y="380.1" font-size="7" fill="#2f4585">VBIASVCO</text>
<path d="M741 393.5L756 393.5" stroke="#ff0000"/>
<text x="750" y="390" font-size="7" fill="#1e1616" text-anchor="end">27</text>
<text x="759.4" y="396.1" font-size="7" fill="#2f4585">VBIASVCO2</text>
<path d="M741 408.5L756 408.5" stroke="#ff0000"/>
<text x="750" y="405" font-size="7" fill="#1e1616" text-anchor="end">33</text>
<text x="759.4" y="411.1" font-size="7" fill="#2f4585">VBIASVARAC</text>
<path d="M741 423.5L756 423.5" stroke="#ff0000"/>
<text x="750" y="420" font-size="7" fill="#1e1616" text-anchor="end">8</text>
<text x="759.4" y="426.1" font-size="7" fill="#2f4585">OSCINP</text>
<rect x="753" y="421" width="1" height="5" fill="#ff0000" stroke="none"/>
<rect x="754" y="422" width="1" height="3" fill="#ff0000" stroke="none"/>
<rect x="755" y="423" width="1" height="1" fill="#ff0000" stroke="none"/>
<path d="M741 438.5L756 438.5" stroke="#ff0000"/>
<text x="750" y="435" font-size="7" fill="#1e1616" text-anchor="end">9</text>
<text x="759.4" y="441.1" font-size="7" fill="#2f4585">OSCINM</text>
<rect x="753" y="436" width="1" height="5" fill="#ff0000" stroke="none"/>
<rect x="754" y="437" width="1" height="3" fill="#ff0000" stroke="none"/>
<rect x="755" y="438" width="1" height="1" fill="#ff0000" stroke="none"/>
<path d="M756.5 254L759.5 256.5L756.5 259" stroke="#0000ff" fill="none"/>
<path d="M756.5 273L759.5 275.5L756.5 278" stroke="#0000ff" fill="none"/>
<path d="M869 149.5L884 149.5" stroke="#ff0000"/>
<text x="874.6" y="146" font-size="7" fill="#1e1616">23</text>
<text x="865.2" y="152.1" font-size="7" fill="#2f4585" text-anchor="end">RFOUTAP</text>
<path d="M869 165.5L884 165.5" stroke="#ff0000"/>
<text x="874.6" y="162" font-size="7" fill="#1e1616">22</text>
<text x="865.2" y="168.1" font-size="7" fill="#2f4585" text-anchor="end">RFOUTAM</text>
<path d="M869 180.5L884 180.5" stroke="#ff0000"/>
<text x="874.6" y="177" font-size="7" fill="#1e1616">18</text>
<text x="865.2" y="183.1" font-size="7" fill="#2f4585" text-anchor="end">RFOUTBM</text>
<path d="M869 195.5L884 195.5" stroke="#ff0000"/>
<text x="874.6" y="192" font-size="7" fill="#1e1616">19</text>
<text x="865.2" y="198.1" font-size="7" fill="#2f4585" text-anchor="end">RFOUTBP</text>
<path d="M869 210.5L882 210.5" stroke="#ff0000"/>
<text x="874.6" y="207" font-size="7" fill="#1e1616">20</text>
<text x="865.2" y="213.1" font-size="7" fill="#2f4585" text-anchor="end">MUXOUT</text>
<rect x="882.5" y="208.5" width="3" height="4" fill="#fff" stroke="#6c6c6c"/>
<path d="M869 225.5L884 225.5" stroke="#ff0000"/>
<text x="874.6" y="222" font-size="7" fill="#1e1616">12</text>
<text x="865.2" y="228.1" font-size="7" fill="#2f4585" text-anchor="end">CPOUT</text>
<path d="M869 248.5L882 248.5" stroke="#ff0000"/>
<text x="874.6" y="245" font-size="7" fill="#1e1616">35</text>
<text x="865.2" y="251.1" font-size="7" fill="#2f4585" text-anchor="end">VTUNE</text>
<rect x="872" y="246" width="1" height="5" fill="#ff0000" stroke="none"/>
<rect x="871" y="247" width="1" height="3" fill="#ff0000" stroke="none"/>
<rect x="870" y="248" width="1" height="1" fill="#ff0000" stroke="none"/>
<path d="M869 263.5L882 263.5" stroke="#ff0000"/>
<text x="874.6" y="260" font-size="7" fill="#1e1616">5</text>
<text x="865.2" y="266.1" font-size="7" fill="#2f4585" text-anchor="end">SYNC</text>
<rect x="872" y="261" width="1" height="5" fill="#ff0000" stroke="none"/>
<rect x="871" y="262" width="1" height="3" fill="#ff0000" stroke="none"/>
<rect x="870" y="263" width="1" height="1" fill="#ff0000" stroke="none"/>
<rect x="882.5" y="261.5" width="3" height="4" fill="#fff" stroke="#6c6c6c"/>
<path d="M869 279.5L882 279.5" stroke="#ff0000"/>
<text x="874.6" y="276" font-size="7" fill="#1e1616">28</text>
<text x="865.2" y="282.1" font-size="7" fill="#2f4585" text-anchor="end">SYSREFREQ</text>
<rect x="872" y="277" width="1" height="5" fill="#ff0000" stroke="none"/>
<rect x="871" y="278" width="1" height="3" fill="#ff0000" stroke="none"/>
<rect x="870" y="279" width="1" height="1" fill="#ff0000" stroke="none"/>
<rect x="882.5" y="277.5" width="3" height="4" fill="#fff" stroke="#6c6c6c"/>
<path d="M869 294.5L882 294.5" stroke="#ff0000"/>
<text x="874.6" y="291" font-size="7" fill="#1e1616">30</text>
<text x="865.2" y="297.1" font-size="7" fill="#2f4585" text-anchor="end">RAMPCLK</text>
<rect x="872" y="292" width="1" height="5" fill="#ff0000" stroke="none"/>
<rect x="871" y="293" width="1" height="3" fill="#ff0000" stroke="none"/>
<rect x="870" y="294" width="1" height="1" fill="#ff0000" stroke="none"/>
<rect x="882.5" y="292.5" width="3" height="4" fill="#fff" stroke="#6c6c6c"/>
<path d="M869 309.5L882 309.5" stroke="#ff0000"/>
<text x="874.6" y="306" font-size="7" fill="#1e1616">32</text>
<text x="865.2" y="312.1" font-size="7" fill="#2f4585" text-anchor="end">RAMPDIR</text>
<rect x="872" y="307" width="1" height="5" fill="#ff0000" stroke="none"/>
<rect x="871" y="308" width="1" height="3" fill="#ff0000" stroke="none"/>
<rect x="870" y="309" width="1" height="1" fill="#ff0000" stroke="none"/>
<rect x="882.5" y="307.5" width="3" height="4" fill="#fff" stroke="#6c6c6c"/>
<path d="M869 377.5L884 377.5" stroke="#ff0000"/>
<path d="M885 377.5L908 377.5" stroke="#7d0046"/>
<text x="874.8" y="373.8" font-size="7" fill="#1e1616">13</text>
<text x="865.2" y="379.8" font-size="7" fill="#2f4585" text-anchor="end">GND</text>
<path d="M869 385.5L884 385.5" stroke="#ff0000"/>
<path d="M885 385.5L908 385.5" stroke="#7d0046"/>
<text x="874.8" y="381.8" font-size="7" fill="#1e1616">6</text>
<text x="865.2" y="387.8" font-size="7" fill="#2f4585" text-anchor="end">GND-1</text>
<path d="M869 393.5L884 393.5" stroke="#ff0000"/>
<path d="M885 393.5L908 393.5" stroke="#7d0046"/>
<text x="874.8" y="389.8" font-size="7" fill="#1e1616">14</text>
<text x="852.8" y="395.8" font-size="7" fill="#2f4585" text-anchor="end">GND-1</text>
<text x="865.2" y="395.8" font-size="7" fill="#2f4585" text-anchor="end">1</text>
<path d="M869 400.5L884 400.5" stroke="#ff0000"/>
<path d="M885 400.5L908 400.5" stroke="#7d0046"/>
<text x="874.8" y="396.8" font-size="7" fill="#1e1616">2</text>
<text x="865.2" y="402.8" font-size="7" fill="#2f4585" text-anchor="end">GND-2</text>
<path d="M869 415.5L884 415.5" stroke="#ff0000"/>
<path d="M885 415.5L908 415.5" stroke="#7d0046"/>
<text x="874.8" y="411.8" font-size="7" fill="#1e1616">4</text>
<text x="852.8" y="417.8" font-size="7" fill="#2f4585" text-anchor="end">GND-2</text>
<text x="865.2" y="417.8" font-size="7" fill="#2f4585" text-anchor="end">1</text>
<path d="M869 423.5L884 423.5" stroke="#ff0000"/>
<path d="M885 423.5L908 423.5" stroke="#7d0046"/>
<text x="874.8" y="419.8" font-size="7" fill="#1e1616">25</text>
<text x="852.8" y="425.8" font-size="7" fill="#2f4585" text-anchor="end">GND-2</text>
<text x="865.2" y="425.8" font-size="7" fill="#2f4585" text-anchor="end">2</text>
<path d="M869 431.5L884 431.5" stroke="#ff0000"/>
<path d="M885 431.5L908 431.5" stroke="#7d0046"/>
<text x="874.8" y="427.8" font-size="7" fill="#1e1616">31</text>
<text x="852.8" y="433.8" font-size="7" fill="#2f4585" text-anchor="end">GND-2</text>
<text x="865.2" y="433.8" font-size="7" fill="#2f4585" text-anchor="end">3</text>
<path d="M869 438.5L884 438.5" stroke="#ff0000"/>
<path d="M885 438.5L908 438.5" stroke="#7d0046"/>
<text x="874.8" y="434.8" font-size="7" fill="#1e1616">34</text>
<text x="852.8" y="440.8" font-size="7" fill="#2f4585" text-anchor="end">GND-2</text>
<text x="865.2" y="440.8" font-size="7" fill="#2f4585" text-anchor="end">4</text>
<path d="M869 446.5L884 446.5" stroke="#ff0000"/>
<path d="M885 446.5L908 446.5" stroke="#7d0046"/>
<text x="874.8" y="442.8" font-size="7" fill="#1e1616">39</text>
<text x="852.8" y="448.8" font-size="7" fill="#2f4585" text-anchor="end">GND-2</text>
<text x="865.2" y="448.8" font-size="7" fill="#2f4585" text-anchor="end">5</text>
<path d="M869 453.5L884 453.5" stroke="#ff0000"/>
<path d="M885 453.5L908 453.5" stroke="#7d0046"/>
<text x="874.8" y="449.8" font-size="7" fill="#1e1616">40</text>
<text x="852.8" y="455.8" font-size="7" fill="#2f4585" text-anchor="end">GND-2</text>
<text x="865.2" y="455.8" font-size="7" fill="#2f4585" text-anchor="end">6</text>
<path d="M869 461.5L884 461.5" stroke="#ff0000"/>
<path d="M885 461.5L908 461.5" stroke="#7d0046"/>
<text x="874.8" y="457.8" font-size="7" fill="#1e1616">41</text>
<text x="865.2" y="463.8" font-size="7" fill="#2f4585" text-anchor="end">EXP</text>
<path d="M907.5 377L907.5 492" stroke="#7d0046"/>
<path d="M899.5 491.5L914.5 491.5L907.5 499.5L899.5 491.5" stroke="#ff0000" fill="none"/>
<text x="562" y="97" font-size="5.5" fill="#3a2c2c">VccRF</text>
<path d="M595.5 92L595.5 101" stroke="#ff0000"/>
<path d="M595 96.5L603 96.5" stroke="#ff0000"/>
<path d="M604 96.5L681 96.5" stroke="#7d0046"/>
<path d="M680 96.5L687 96.5" stroke="#ff0000"/>
<path d="M687 96.5L689 96.5" stroke="#0000ff"/>
<path d="M689.5 92L689.5 100" stroke="#0000ff"/>
<path d="M692.5 92L692.5 100" stroke="#0000ff"/>
<path d="M693 96.5L694 96.5" stroke="#0000ff"/>
<path d="M694 96.5L702 96.5" stroke="#ff0000"/>
<path d="M703 96.5L741 96.5" stroke="#7d0046"/>
<path d="M740.5 96L740.5 105" stroke="#7d0046"/>
<path d="M732.5 104.5L747.5 104.5L740.5 111.5L732.5 104.5" stroke="#ff0000" fill="none"/>
<path d="M656.5 96L656.5 120" stroke="#7d0046"/>
<path d="M656 119.5L725 119.5" stroke="#7d0046"/>
<path d="M724.5 119L724.5 150" stroke="#7d0046"/>
<path d="M724 149.5L742 149.5" stroke="#7d0046"/>
<text x="686.2" y="81.6" font-size="5.5" fill="#3c3c96">C13</text>
<text x="686.2" y="109" font-size="5.5" fill="#3c3c96">0.1uF</text>
<text x="694" y="131.6" font-size="5.5" fill="#3a2c2c">VccRF</text>
<path d="M698 134.5L705 134.5" stroke="#ff0000"/>
<path d="M702.5 134L702.5 142" stroke="#ff0000"/>
<path d="M702.5 143L702.5 226" stroke="#7d0046"/>
<path d="M603.5 165L603.5 242" stroke="#7d0046"/>
<path d="M595.5 241.5L610.5 241.5L603.5 248.5L595.5 241.5" stroke="#ff0000" fill="none"/>
<path d="M603 165.5L620 165.5" stroke="#7d0046"/>
<path d="M620 165.5L626 165.5" stroke="#ff0000"/>
<path d="M626 165.5L628 165.5" stroke="#0000ff"/>
<path d="M628.5 161L628.5 169" stroke="#0000ff"/>
<path d="M631.5 161L631.5 169" stroke="#0000ff"/>
<path d="M632 165.5L633 165.5" stroke="#0000ff"/>
<path d="M633 165.5L641 165.5" stroke="#ff0000"/>
<path d="M642 165.5L742 165.5" stroke="#7d0046"/>
<text x="629.4" y="153.5" font-size="5.5" fill="#3c3c96">C39</text>
<text x="629.6" y="172.7" font-size="5.5" fill="#3c3c96">1uF</text>
<path d="M603 180.5L643 180.5" stroke="#7d0046"/>
<path d="M643 180.5L649 180.5" stroke="#ff0000"/>
<path d="M649 180.5L651 180.5" stroke="#0000ff"/>
<path d="M651.5 176L651.5 184" stroke="#0000ff"/>
<path d="M654.5 176L654.5 184" stroke="#0000ff"/>
<path d="M655 180.5L656 180.5" stroke="#0000ff"/>
<path d="M656 180.5L664 180.5" stroke="#ff0000"/>
<path d="M665 180.5L742 180.5" stroke="#7d0046"/>
<text x="652.4" y="169.5" font-size="5.5" fill="#3c3c96">C40</text>
<text x="652.6" y="188.5" font-size="5.5" fill="#3c3c96">1uF</text>
<path d="M603 195.5L666 195.5" stroke="#7d0046"/>
<path d="M666 195.5L672 195.5" stroke="#ff0000"/>
<path d="M672 195.5L674 195.5" stroke="#0000ff"/>
<path d="M674.5 191L674.5 199" stroke="#0000ff"/>
<path d="M677.5 191L677.5 199" stroke="#0000ff"/>
<path d="M678 195.5L679 195.5" stroke="#0000ff"/>
<path d="M679 195.5L687 195.5" stroke="#ff0000"/>
<path d="M688 195.5L742 195.5" stroke="#7d0046"/>
<text x="675.4" y="184.5" font-size="5.5" fill="#3c3c96">C11</text>
<text x="675.6" y="203.5" font-size="5.5" fill="#3c3c96">1uF</text>
<path d="M603 210.5L612 210.5" stroke="#7d0046"/>
<path d="M612 210.5L618 210.5" stroke="#ff0000"/>
<path d="M618 210.5L620 210.5" stroke="#0000ff"/>
<path d="M620.5 206L620.5 214" stroke="#0000ff"/>
<path d="M623.5 206L623.5 214" stroke="#0000ff"/>
<path d="M624 210.5L625 210.5" stroke="#0000ff"/>
<path d="M625 210.5L633 210.5" stroke="#ff0000"/>
<path d="M634 210.5L742 210.5" stroke="#7d0046"/>
<text x="622.2" y="199.5" font-size="5.5" fill="#3c3c96">C3</text>
<text x="621.6" y="218.5" font-size="5.5" fill="#3c3c96">1uF</text>
<path d="M603 225.5L643 225.5" stroke="#7d0046"/>
<path d="M643 225.5L649 225.5" stroke="#ff0000"/>
<path d="M649 225.5L651 225.5" stroke="#0000ff"/>
<path d="M651.5 221L651.5 229" stroke="#0000ff"/>
<path d="M654.5 221L654.5 229" stroke="#0000ff"/>
<path d="M655 225.5L656 225.5" stroke="#0000ff"/>
<path d="M656 225.5L664 225.5" stroke="#ff0000"/>
<path d="M665 225.5L742 225.5" stroke="#7d0046"/>
<text x="652.4" y="214.5" font-size="5.5" fill="#3c3c96">C37</text>
<text x="652.6" y="233.5" font-size="5.5" fill="#3c3c96">1uF</text>
<path d="M641.5 317L641.5 424" stroke="#7d0046"/>
<path d="M633.5 423.5L648.5 423.5L641.5 431.5L633.5 423.5" stroke="#ff0000" fill="none"/>
<rect x="646" y="428" width="2" height="1" fill="#ff0000" stroke="none"/>
<rect x="646" y="429" width="3" height="1" fill="#ff0000" stroke="none"/>
<rect x="646" y="430" width="1" height="1" fill="#ff0000" stroke="none"/>
<path d="M641 317.5L688 317.5" stroke="#7d0046"/>
<path d="M688 317.5L694 317.5" stroke="#ff0000"/>
<path d="M694 317.5L696 317.5" stroke="#0000ff"/>
<path d="M696.5 313L696.5 321" stroke="#0000ff"/>
<path d="M699.5 313L699.5 321" stroke="#0000ff"/>
<path d="M700 317.5L701 317.5" stroke="#0000ff"/>
<path d="M701 317.5L709 317.5" stroke="#ff0000"/>
<path d="M710 317.5L742 317.5" stroke="#7d0046"/>
<text x="694" y="306.6" font-size="5.5" fill="#3c3c96">C34</text>
<text x="698.4" y="325.2" font-size="5.5" fill="#3c3c96">1uF</text>
<path d="M641 332.5L658 332.5" stroke="#7d0046"/>
<path d="M658 332.5L664 332.5" stroke="#ff0000"/>
<path d="M664 332.5L666 332.5" stroke="#0000ff"/>
<path d="M666.5 328L666.5 336" stroke="#0000ff"/>
<path d="M669.5 328L669.5 336" stroke="#0000ff"/>
<path d="M670 332.5L671 332.5" stroke="#0000ff"/>
<path d="M671 332.5L679 332.5" stroke="#ff0000"/>
<path d="M680 332.5L742 332.5" stroke="#7d0046"/>
<text x="664" y="321.6" font-size="5.5" fill="#3c3c96">C28</text>
<text x="668.4" y="340.2" font-size="5.5" fill="#3c3c96">1uF</text>
<path d="M641 347.5L688 347.5" stroke="#7d0046"/>
<path d="M688 347.5L694 347.5" stroke="#ff0000"/>
<path d="M694 347.5L696 347.5" stroke="#0000ff"/>
<path d="M696.5 343L696.5 351" stroke="#0000ff"/>
<path d="M699.5 343L699.5 351" stroke="#0000ff"/>
<path d="M700 347.5L701 347.5" stroke="#0000ff"/>
<path d="M701 347.5L709 347.5" stroke="#ff0000"/>
<path d="M710 347.5L742 347.5" stroke="#7d0046"/>
<text x="694" y="336.6" font-size="5.5" fill="#3c3c96">C29</text>
<text x="698.4" y="355.2" font-size="5.5" fill="#3c3c96">1uF</text>
<path d="M641 362.5L658 362.5" stroke="#7d0046"/>
<path d="M658 362.5L664 362.5" stroke="#ff0000"/>
<path d="M664 362.5L666 362.5" stroke="#0000ff"/>
<path d="M666.5 358L666.5 366" stroke="#0000ff"/>
<path d="M669.5 358L669.5 366" stroke="#0000ff"/>
<path d="M670 362.5L671 362.5" stroke="#0000ff"/>
<path d="M671 362.5L679 362.5" stroke="#ff0000"/>
<path d="M680 362.5L742 362.5" stroke="#7d0046"/>
<text x="664" y="351.6" font-size="5.5" fill="#3c3c96">C30</text>
<text x="668.4" y="370.2" font-size="5.5" fill="#3c3c96">1uF</text>
<path d="M641 377.5L688 377.5" stroke="#7d0046"/>
<path d="M688 377.5L694 377.5" stroke="#ff0000"/>
<path d="M694 377.5L696 377.5" stroke="#0000ff"/>
<path d="M696.5 373L696.5 381" stroke="#0000ff"/>
<path d="M699.5 373L699.5 381" stroke="#0000ff"/>
<path d="M700 377.5L701 377.5" stroke="#0000ff"/>
<path d="M701 377.5L709 377.5" stroke="#ff0000"/>
<path d="M710 377.5L742 377.5" stroke="#7d0046"/>
<text x="694" y="366.6" font-size="5.5" fill="#3c3c96">C31</text>
<text x="698.4" y="385.2" font-size="5.5" fill="#3c3c96">1uF</text>
<path d="M641 393.5L658 393.5" stroke="#7d0046"/>
<path d="M658 393.5L664 393.5" stroke="#ff0000"/>
<path d="M664 393.5L666 393.5" stroke="#0000ff"/>
<path d="M666.5 389L666.5 397" stroke="#0000ff"/>
<path d="M669.5 389L669.5 397" stroke="#0000ff"/>
<path d="M670 393.5L671 393.5" stroke="#0000ff"/>
<path d="M671 393.5L679 393.5" stroke="#ff0000"/>
<path d="M680 393.5L742 393.5" stroke="#7d0046"/>
<text x="664" y="382.6" font-size="5.5" fill="#3c3c96">C32</text>
<text x="668.4" y="401.2" font-size="5.5" fill="#3c3c96">1uF</text>
<path d="M641 408.5L688 408.5" stroke="#7d0046"/>
<path d="M688 408.5L694 408.5" stroke="#ff0000"/>
<path d="M694 408.5L696 408.5" stroke="#0000ff"/>
<path d="M696.5 404L696.5 412" stroke="#0000ff"/>
<path d="M699.5 404L699.5 412" stroke="#0000ff"/>
<path d="M700 408.5L701 408.5" stroke="#0000ff"/>
<path d="M701 408.5L709 408.5" stroke="#ff0000"/>
<path d="M710 408.5L742 408.5" stroke="#7d0046"/>
<text x="694" y="397.6" font-size="5.5" fill="#3c3c96">C33</text>
<text x="698.4" y="416.2" font-size="5.5" fill="#3c3c96">1uF</text>
<path d="M724 423.5L742 423.5" stroke="#7d0046"/>
<path d="M724.5 423L724.5 447" stroke="#7d0046"/>
<path d="M695 446.5L725 446.5" stroke="#7d0046"/>
<path d="M672 446.5L679 446.5" stroke="#ff0000"/>
<path d="M679 446.5L681 446.5" stroke="#0000ff"/>
<path d="M681.5 442L681.5 450" stroke="#0000ff"/>
<path d="M684.5 442L684.5 450" stroke="#0000ff"/>
<path d="M685 446.5L686 446.5" stroke="#0000ff"/>
<path d="M686 446.5L694 446.5" stroke="#ff0000"/>
<path d="M627 446.5L672 446.5" stroke="#7d0046"/>
<path d="M740 438.5L742 438.5" stroke="#7d0046"/>
<path d="M740.5 438L740.5 462" stroke="#7d0046"/>
<path d="M702 461.5L741 461.5" stroke="#7d0046"/>
<path d="M702.5 461L702.5 492" stroke="#7d0046"/>
<path d="M680 491.5L687 491.5" stroke="#ff0000"/>
<path d="M687 491.5L689 491.5" stroke="#0000ff"/>
<path d="M689.5 487L689.5 495" stroke="#0000ff"/>
<path d="M692.5 487L692.5 495" stroke="#0000ff"/>
<path d="M693 491.5L694 491.5" stroke="#0000ff"/>
<path d="M694 491.5L702 491.5" stroke="#ff0000"/>
<path d="M627 491.5L680 491.5" stroke="#7d0046"/>
<path d="M656.5 446L656.5 454" stroke="#7d0046"/>
<path d="M656.5 454L656.5 462" stroke="#ff0000"/>
<path d="M656.5 476L656.5 484" stroke="#ff0000"/>
<rect x="656" y="462" width="2" height="1" fill="#0000ff" stroke="none"/>
<rect x="658" y="463" width="2" height="1" fill="#0000ff" stroke="none"/>
<rect x="656" y="464" width="2" height="1" fill="#0000ff" stroke="none"/>
<rect x="653" y="465" width="3" height="1" fill="#0000ff" stroke="none"/>
<rect x="654" y="466" width="3" height="1" fill="#0000ff" stroke="none"/>
<rect x="657" y="467" width="3" height="1" fill="#0000ff" stroke="none"/>
<rect x="657" y="468" width="2" height="1" fill="#0000ff" stroke="none"/>
<rect x="654" y="469" width="3" height="1" fill="#0000ff" stroke="none"/>
<rect x="653" y="470" width="3" height="1" fill="#0000ff" stroke="none"/>
<rect x="656" y="471" width="3" height="1" fill="#0000ff" stroke="none"/>
<rect x="657" y="472" width="3" height="1" fill="#0000ff" stroke="none"/>
<rect x="655" y="473" width="2" height="1" fill="#0000ff" stroke="none"/>
<rect x="653" y="474" width="2" height="1" fill="#0000ff" stroke="none"/>
<rect x="655" y="475" width="2" height="1" fill="#0000ff" stroke="none"/>
<path d="M656.5 485L656.5 492" stroke="#7d0046"/>
<text x="595.2" y="451" font-size="4.7" fill="#3a2c2c">OSCINP</text>
<text x="595.2" y="496" font-size="4.7" fill="#3a2c2c">OSCINM</text>
<text x="683" y="436" font-size="5.5" fill="#3c3c96">C35</text>
<text x="683" y="455" font-size="5.5" fill="#3c3c96">0.1uF</text>
<text x="690" y="481" font-size="5.5" fill="#3c3c96">C36</text>
<text x="690" y="499.6" font-size="5.5" fill="#3c3c96">0.1uF</text>
<text x="668.6" y="465.6" font-size="5.5" fill="#3c3c96">R8</text>
<text x="668.6" y="475" font-size="5.5" fill="#3c3c96">100</text>
<path d="M884.5 58L884.5 150" stroke="#7d0046"/>
<path d="M884 58.5L1022 58.5" stroke="#7d0046"/>
<path d="M1022 58.5L1029 58.5" stroke="#ff0000"/>
<path d="M1029 58.5L1031 58.5" stroke="#0000ff"/>
<path d="M1031.5 54L1031.5 62" stroke="#0000ff"/>
<path d="M1034.5 54L1034.5 62" stroke="#0000ff"/>
<path d="M1035 58.5L1036 58.5" stroke="#0000ff"/>
<path d="M1036 58.5L1041 58.5" stroke="#ff0000"/>
<rect x="1041.5" y="56.5" width="4" height="3" fill="#fff" stroke="#6c6c6c"/>
<text x="1031.8" y="48" font-size="5.5" fill="#3c3c96">C45</text>
<text x="1033" y="67" font-size="5.5" fill="#3c3c96">1n</text>
<text x="1051" y="55.8" font-size="4.9" fill="#3a2c2c" textLength="20.8" lengthAdjust="spacingAndGlyphs">RFOUTAP</text>
<path d="M990.5 58L990.5 74" stroke="#7d0046"/>
<path d="M990.5 74L990.5 82" stroke="#ff0000"/>
<path d="M990.5 96L990.5 104" stroke="#ff0000"/>
<rect x="990" y="82" width="2" height="1" fill="#0000ff" stroke="none"/>
<rect x="992" y="83" width="2" height="1" fill="#0000ff" stroke="none"/>
<rect x="990" y="84" width="2" height="1" fill="#0000ff" stroke="none"/>
<rect x="987" y="85" width="3" height="1" fill="#0000ff" stroke="none"/>
<rect x="988" y="86" width="3" height="1" fill="#0000ff" stroke="none"/>
<rect x="991" y="87" width="3" height="1" fill="#0000ff" stroke="none"/>
<rect x="991" y="88" width="2" height="1" fill="#0000ff" stroke="none"/>
<rect x="988" y="89" width="3" height="1" fill="#0000ff" stroke="none"/>
<rect x="987" y="90" width="3" height="1" fill="#0000ff" stroke="none"/>
<rect x="990" y="91" width="3" height="1" fill="#0000ff" stroke="none"/>
<rect x="991" y="92" width="3" height="1" fill="#0000ff" stroke="none"/>
<rect x="989" y="93" width="2" height="1" fill="#0000ff" stroke="none"/>
<rect x="987" y="94" width="2" height="1" fill="#0000ff" stroke="none"/>
<rect x="989" y="95" width="2" height="1" fill="#0000ff" stroke="none"/>
<path d="M990.5 105L990.5 127" stroke="#7d0046"/>
<path d="M990.5 127L990.5 135" stroke="#ff0000"/>
<path d="M990.5 149L990.5 157" stroke="#ff0000"/>
<rect x="990" y="135" width="2" height="1" fill="#0000ff" stroke="none"/>
<rect x="992" y="136" width="2" height="1" fill="#0000ff" stroke="none"/>
<rect x="990" y="137" width="2" height="1" fill="#0000ff" stroke="none"/>
<rect x="987" y="138" width="3" height="1" fill="#0000ff" stroke="none"/>
<rect x="988" y="139" width="3" height="1" fill="#0000ff" stroke="none"/>
<rect x="991" y="140" width="3" height="1" fill="#0000ff" stroke="none"/>
<rect x="991" y="141" width="2" height="1" fill="#0000ff" stroke="none"/>
<rect x="988" y="142" width="3" height="1" fill="#0000ff" stroke="none"/>
<rect x="987" y="143" width="3" height="1" fill="#0000ff" stroke="none"/>
<rect x="990" y="144" width="3" height="1" fill="#0000ff" stroke="none"/>
<rect x="991" y="145" width="3" height="1" fill="#0000ff" stroke="none"/>
<rect x="989" y="146" width="2" height="1" fill="#0000ff" stroke="none"/>
<rect x="987" y="147" width="2" height="1" fill="#0000ff" stroke="none"/>
<rect x="989" y="148" width="2" height="1" fill="#0000ff" stroke="none"/>
<path d="M990.5 158L990.5 166" stroke="#7d0046"/>
<text x="1003.4" y="86" font-size="5.5" fill="#3c3c96">R13</text>
<text x="1003.4" y="95" font-size="5.5" fill="#3c3c96">1k</text>
<text x="1003.4" y="139" font-size="5.5" fill="#3c3c96">R12</text>
<text x="1003.4" y="148" font-size="5.5" fill="#3c3c96">1k</text>
<path d="M990 111.5L1015 111.5" stroke="#7d0046"/>
<path d="M1015 111.5L1021 111.5" stroke="#ff0000"/>
<path d="M1021 111.5L1023 111.5" stroke="#0000ff"/>
<path d="M1023.5 107L1023.5 115" stroke="#0000ff"/>
<path d="M1026.5 107L1026.5 115" stroke="#0000ff"/>
<path d="M1027 111.5L1028 111.5" stroke="#0000ff"/>
<path d="M1028 111.5L1036 111.5" stroke="#ff0000"/>
<path d="M1036.5 111L1036.5 128" stroke="#7d0046"/>
<path d="M1028.5 127.5L1043.5 127.5L1036.5 134.5L1028.5 127.5" stroke="#ff0000" fill="none"/>
<rect x="1041" y="130" width="1" height="4" fill="#ff0000" stroke="none"/>
<rect x="1040" y="130" width="3" height="1" fill="#ff0000" stroke="none"/>
<rect x="1041" y="131" width="3" height="1" fill="#ff0000" stroke="none"/>
<rect x="1041" y="133" width="3" height="1" fill="#ff0000" stroke="none"/>
<text x="1025.2" y="101" font-size="5.5" fill="#3c3c96">C15</text>
<text x="1026" y="120" font-size="5.5" fill="#3c3c96">1n</text>
<path d="M977 119.5L991 119.5" stroke="#7d0046"/>
<path d="M969 119.5L976 119.5" stroke="#ff0000"/>
<path d="M938.5 119.5a3.75 4 0 0 1 7.5 0a3.75 4 0 0 1 7.5 0a3.75 4 0 0 1 7.5 0a3.75 4 0 0 1 7.5 0" stroke="#0000ff" fill="none" style="shape-rendering:auto"/>
<path d="M931 119.5L938 119.5" stroke="#ff0000"/>
<path d="M914 119.5L931 119.5" stroke="#7d0046"/>
<path d="M914.5 112L914.5 120" stroke="#7d0046"/>
<path d="M914.5 105L914.5 112" stroke="#ff0000"/>
<path d="M911 104.5L918 104.5" stroke="#ff0000"/>
<path d="M937 108.5L969 108.5" stroke="#0000ff"/>
<path d="M937 111.5L969 111.5" stroke="#0000ff"/>
<text x="906.6" y="101.2" font-size="5.5" fill="#3a2c2c">VccRF</text>
<text x="938" y="97.2" font-size="5.5" fill="#3c3c96">18nH</text>
<path d="M885 165.5L1045 165.5" stroke="#7d0046"/>
<path d="M1045 165.5L1052 165.5" stroke="#ff0000"/>
<path d="M1052 165.5L1054 165.5" stroke="#0000ff"/>
<path d="M1054.5 161L1054.5 169" stroke="#0000ff"/>
<path d="M1057.5 161L1057.5 169" stroke="#0000ff"/>
<path d="M1058 165.5L1059 165.5" stroke="#0000ff"/>
<path d="M1059 165.5L1065 165.5" stroke="#ff0000"/>
<rect x="1065.5" y="163.5" width="4" height="3" fill="#fff" stroke="#6c6c6c"/>
<text x="1055.4" y="154" font-size="5.5" fill="#3c3c96">C19</text>
<text x="1056" y="173.2" font-size="5.5" fill="#3c3c96">1n</text>
<text x="1082" y="162" font-size="4.9" fill="#3a2c2c" textLength="21.4" lengthAdjust="spacingAndGlyphs">RFOUTAM</text>
<path d="M885 180.5L1181 180.5" stroke="#7d0046"/>
<path d="M1181 180.5L1188 180.5" stroke="#ff0000"/>
<path d="M1188 180.5L1190 180.5" stroke="#0000ff"/>
<path d="M1190.5 176L1190.5 184" stroke="#0000ff"/>
<path d="M1193.5 176L1193.5 184" stroke="#0000ff"/>
<path d="M1194 180.5L1195 180.5" stroke="#0000ff"/>
<path d="M1195 180.5L1201 180.5" stroke="#ff0000"/>
<rect x="1201.5" y="178.5" width="3" height="3" fill="#fff" stroke="#6c6c6c"/>
<text x="1192.2" y="170" font-size="5.5" fill="#3c3c96">C44</text>
<text x="1193" y="189.4" font-size="5.5" fill="#3c3c96">1n</text>
<text x="1218.2" y="177" font-size="4.9" fill="#3a2c2c" textLength="20.8" lengthAdjust="spacingAndGlyphs">RFoutBM</text>
<path d="M1150.5 180L1150.5 196" stroke="#7d0046"/>
<path d="M1150.5 196L1150.5 203" stroke="#ff0000"/>
<path d="M1150.5 218L1150.5 225" stroke="#ff0000"/>
<rect x="1150" y="203" width="2" height="1" fill="#0000ff" stroke="none"/>
<rect x="1152" y="204" width="2" height="1" fill="#0000ff" stroke="none"/>
<rect x="1150" y="205" width="3" height="1" fill="#0000ff" stroke="none"/>
<rect x="1148" y="206" width="2" height="1" fill="#0000ff" stroke="none"/>
<rect x="1147" y="207" width="3" height="1" fill="#0000ff" stroke="none"/>
<rect x="1150" y="208" width="3" height="1" fill="#0000ff" stroke="none"/>
<rect x="1152" y="209" width="2" height="1" fill="#0000ff" stroke="none"/>
<rect x="1149" y="210" width="3" height="1" fill="#0000ff" stroke="none"/>
<rect x="1147" y="211" width="2" height="1" fill="#0000ff" stroke="none"/>
<rect x="1148" y="212" width="3" height="1" fill="#0000ff" stroke="none"/>
<rect x="1151" y="213" width="2" height="1" fill="#0000ff" stroke="none"/>
<rect x="1151" y="214" width="3" height="1" fill="#0000ff" stroke="none"/>
<rect x="1148" y="215" width="3" height="1" fill="#0000ff" stroke="none"/>
<rect x="1147" y="216" width="2" height="1" fill="#0000ff" stroke="none"/>
<rect x="1149" y="217" width="2" height="1" fill="#0000ff" stroke="none"/>
<path d="M1150.5 226L1150.5 302" stroke="#7d0046"/>
<path d="M1150.5 302L1150.5 310" stroke="#ff0000"/>
<path d="M1150.5 324L1150.5 332" stroke="#ff0000"/>
<rect x="1150" y="310" width="2" height="1" fill="#0000ff" stroke="none"/>
<rect x="1152" y="311" width="2" height="1" fill="#0000ff" stroke="none"/>
<rect x="1150" y="312" width="2" height="1" fill="#0000ff" stroke="none"/>
<rect x="1147" y="313" width="3" height="1" fill="#0000ff" stroke="none"/>
<rect x="1148" y="314" width="3" height="1" fill="#0000ff" stroke="none"/>
<rect x="1151" y="315" width="3" height="1" fill="#0000ff" stroke="none"/>
<rect x="1151" y="316" width="2" height="1" fill="#0000ff" stroke="none"/>
<rect x="1148" y="317" width="3" height="1" fill="#0000ff" stroke="none"/>
<rect x="1147" y="318" width="3" height="1" fill="#0000ff" stroke="none"/>
<rect x="1150" y="319" width="3" height="1" fill="#0000ff" stroke="none"/>
<rect x="1151" y="320" width="3" height="1" fill="#0000ff" stroke="none"/>
<rect x="1149" y="321" width="2" height="1" fill="#0000ff" stroke="none"/>
<rect x="1147" y="322" width="2" height="1" fill="#0000ff" stroke="none"/>
<rect x="1149" y="323" width="2" height="1" fill="#0000ff" stroke="none"/>
<path d="M1150.5 333L1150.5 340" stroke="#7d0046"/>
<text x="1162" y="208" font-size="5.5" fill="#3c3c96">R7</text>
<text x="1162" y="217" font-size="5.5" fill="#3c3c96">1k</text>
<text x="1162" y="314" font-size="5.5" fill="#3c3c96">R11</text>
<text x="1162" y="323" font-size="5.5" fill="#3c3c96">1k</text>
<path d="M1150 241.5L1189 241.5" stroke="#7d0046"/>
<path d="M1189 241.5L1197 241.5" stroke="#ff0000"/>
<path d="M1196.5 241.5a3.75 2.7 0 0 0 7.5 0a3.75 2.7 0 0 0 7.5 0a3.75 2.7 0 0 0 7.5 0a3.75 2.7 0 0 0 7.5 0" stroke="#0000ff" fill="none" style="shape-rendering:auto"/>
<path d="M1227 241.5L1234 241.5" stroke="#ff0000"/>
<path d="M1234.5 219L1234.5 242" stroke="#7d0046"/>
<path d="M1234.5 211L1234.5 219" stroke="#ff0000"/>
<path d="M1230 210.5L1237 210.5" stroke="#ff0000"/>
<path d="M1196 248.5L1227 248.5" stroke="#0000ff"/>
<path d="M1196 252.5L1227 252.5" stroke="#0000ff"/>
<text x="1225.6" y="208" font-size="5.5" fill="#3a2c2c">VccRF</text>
<text x="1196.2" y="234" font-size="5.5" fill="#3c3c96">L3</text>
<path d="M1150 294.5L1181 294.5" stroke="#7d0046"/>
<path d="M1181 294.5L1188 294.5" stroke="#ff0000"/>
<path d="M1188 294.5L1190 294.5" stroke="#0000ff"/>
<path d="M1190.5 290L1190.5 298" stroke="#0000ff"/>
<path d="M1193.5 290L1193.5 298" stroke="#0000ff"/>
<path d="M1194 294.5L1195 294.5" stroke="#0000ff"/>
<path d="M1195 294.5L1203 294.5" stroke="#ff0000"/>
<path d="M1204 294.5L1212 294.5" stroke="#7d0046"/>
<path d="M1211.5 294L1211.5 325" stroke="#7d0046"/>
<path d="M1203.5 324.5L1218.5 324.5L1211.5 332.5L1203.5 324.5" stroke="#ff0000" fill="none"/>
<text x="1192.2" y="284.4" font-size="5.5" fill="#3c3c96">C23</text>
<text x="1193" y="303.2" font-size="5.5" fill="#3c3c96">1n</text>
<path d="M885 195.5L1067 195.5" stroke="#7d0046"/>
<path d="M1066.5 195L1066.5 340" stroke="#7d0046"/>
<path d="M1066 339.5L1228 339.5" stroke="#7d0046"/>
<path d="M1228 339.5L1234 339.5" stroke="#ff0000"/>
<path d="M1234 339.5L1236 339.5" stroke="#0000ff"/>
<path d="M1236.5 335L1236.5 343" stroke="#0000ff"/>
<path d="M1239.5 335L1239.5 343" stroke="#0000ff"/>
<path d="M1240 339.5L1241 339.5" stroke="#0000ff"/>
<path d="M1241 339.5L1248 339.5" stroke="#ff0000"/>
<rect x="1248.5" y="337.5" width="4" height="3" fill="#fff" stroke="#6c6c6c"/>
<text x="1237.4" y="329" font-size="5.5" fill="#3c3c96">C22</text>
<text x="1238" y="348.2" font-size="5.5" fill="#3c3c96">1n</text>
<text x="1264" y="337.2" font-size="4.9" fill="#3a2c2c" textLength="20.8" lengthAdjust="spacingAndGlyphs">RFoutBP</text>
<path d="M885 225.5L1029 225.5" stroke="#7d0046"/>
<path d="M1028.5 225L1028.5 272" stroke="#7d0046"/>
<path d="M873 248.5L953 248.5" stroke="#7d0046"/>
<path d="M953 248.5L961 248.5" stroke="#ff0000"/>
<path d="M975 248.5L982 248.5" stroke="#ff0000"/>
<rect x="961" y="247" width="1" height="2" fill="#0000ff" stroke="none"/>
<rect x="962" y="245" width="1" height="2" fill="#0000ff" stroke="none"/>
<rect x="963" y="247" width="1" height="2" fill="#0000ff" stroke="none"/>
<rect x="964" y="249" width="1" height="3" fill="#0000ff" stroke="none"/>
<rect x="965" y="248" width="1" height="3" fill="#0000ff" stroke="none"/>
<rect x="966" y="245" width="1" height="3" fill="#0000ff" stroke="none"/>
<rect x="967" y="246" width="1" height="2" fill="#0000ff" stroke="none"/>
<rect x="968" y="248" width="1" height="3" fill="#0000ff" stroke="none"/>
<rect x="969" y="249" width="1" height="3" fill="#0000ff" stroke="none"/>
<rect x="970" y="246" width="1" height="3" fill="#0000ff" stroke="none"/>
<rect x="971" y="245" width="1" height="3" fill="#0000ff" stroke="none"/>
<rect x="972" y="248" width="1" height="2" fill="#0000ff" stroke="none"/>
<rect x="973" y="250" width="1" height="2" fill="#0000ff" stroke="none"/>
<rect x="974" y="248" width="1" height="2" fill="#0000ff" stroke="none"/>
<path d="M982 248.5L1029 248.5" stroke="#7d0046"/>
<text x="963.8" y="237.6" font-size="5.5" fill="#3c3c96">R9</text>
<text x="965" y="256.8" font-size="5.5" fill="#3c3c96">1k</text>
<path d="M937.5 248L937.5 266" stroke="#7d0046"/>
<path d="M937.5 266L937.5 273" stroke="#ff0000"/>
<path d="M933 273.5L941 273.5" stroke="#0000ff"/>
<path d="M933 276.5L941 276.5" stroke="#0000ff"/>
<path d="M937.5 277L937.5 286" stroke="#ff0000"/>
<path d="M937.5 286L937.5 310" stroke="#7d0046"/>
<path d="M937 309.5L1029 309.5" stroke="#7d0046"/>
<text x="949" y="276" font-size="5.5" fill="#3c3c96">C43</text>
<text x="949.4" y="285" font-size="5.5" fill="#3c3c96">1n</text>
<path d="M998.5 249L998.5 258" stroke="#ff0000"/>
<path d="M994 258.5L1002 258.5" stroke="#0000ff"/>
<path d="M994 261.5L1002 261.5" stroke="#0000ff"/>
<path d="M998.5 262L998.5 271" stroke="#ff0000"/>
<path d="M998.5 271L998.5 280" stroke="#7d0046"/>
<path d="M998.5 280L998.5 287" stroke="#ff0000"/>
<path d="M998.5 301L998.5 307" stroke="#ff0000"/>
<rect x="998" y="287" width="2" height="1" fill="#0000ff" stroke="none"/>
<rect x="1000" y="288" width="2" height="1" fill="#0000ff" stroke="none"/>
<rect x="998" y="289" width="2" height="1" fill="#0000ff" stroke="none"/>
<rect x="995" y="290" width="3" height="1" fill="#0000ff" stroke="none"/>
<rect x="996" y="291" width="3" height="1" fill="#0000ff" stroke="none"/>
<rect x="999" y="292" width="3" height="1" fill="#0000ff" stroke="none"/>
<rect x="999" y="293" width="2" height="1" fill="#0000ff" stroke="none"/>
<rect x="996" y="294" width="3" height="1" fill="#0000ff" stroke="none"/>
<rect x="995" y="295" width="3" height="1" fill="#0000ff" stroke="none"/>
<rect x="998" y="296" width="3" height="1" fill="#0000ff" stroke="none"/>
<rect x="999" y="297" width="3" height="1" fill="#0000ff" stroke="none"/>
<rect x="997" y="298" width="2" height="1" fill="#0000ff" stroke="none"/>
<rect x="995" y="299" width="2" height="1" fill="#0000ff" stroke="none"/>
<rect x="997" y="300" width="2" height="1" fill="#0000ff" stroke="none"/>
<path d="M998.5 307L998.5 310" stroke="#7d0046"/>
<text x="1010.4" y="261" font-size="5.5" fill="#3c3c96">C42</text>
<text x="1010.8" y="270" font-size="5.5" fill="#3c3c96">1n</text>
<text x="1010.4" y="291" font-size="5.5" fill="#3c3c96">R10</text>
<text x="1010.8" y="300" font-size="5.5" fill="#3c3c96">1k</text>
<path d="M1028.5 272L1028.5 281" stroke="#ff0000"/>
<path d="M1025 281.5L1033 281.5" stroke="#0000ff"/>
<path d="M1025 284.5L1033 284.5" stroke="#0000ff"/>
<path d="M1028.5 285L1028.5 294" stroke="#ff0000"/>
<path d="M1028.5 294L1028.5 310" stroke="#7d0046"/>
<text x="1041" y="283.6" font-size="5.5" fill="#3c3c96">C41</text>
<text x="1041.4" y="293" font-size="5.5" fill="#3c3c96">1n</text>
<path d="M983.5 309L983.5 318" stroke="#7d0046"/>
<path d="M975.5 317.5L990.5 317.5L983.5 324.5L975.5 317.5" stroke="#ff0000" fill="none"/>
<rect x="988" y="320" width="1" height="4" fill="#ff0000" stroke="none"/>
<rect x="987" y="320" width="3" height="1" fill="#ff0000" stroke="none"/>
<rect x="988" y="321" width="3" height="1" fill="#ff0000" stroke="none"/>
<rect x="988" y="323" width="3" height="1" fill="#ff0000" stroke="none"/>
<circle cx="466.1" cy="583.1" r="1.6" fill="#ff00ff" stroke="none"/>
<circle cx="907.1" cy="385.1" r="1.6" fill="#ff00ff" stroke="none"/>
<circle cx="907.1" cy="393.1" r="1.6" fill="#ff00ff" stroke="none"/>
<circle cx="907.1" cy="400.1" r="1.6" fill="#ff00ff" stroke="none"/>
<circle cx="907.1" cy="415.1" r="1.6" fill="#ff00ff" stroke="none"/>
<circle cx="907.1" cy="423.1" r="1.6" fill="#ff00ff" stroke="none"/>
<circle cx="907.1" cy="431.1" r="1.6" fill="#ff00ff" stroke="none"/>
<circle cx="907.1" cy="438.1" r="1.6" fill="#ff00ff" stroke="none"/>
<circle cx="907.1" cy="446.1" r="1.6" fill="#ff00ff" stroke="none"/>
<circle cx="907.1" cy="453.1" r="1.6" fill="#ff00ff" stroke="none"/>
<circle cx="907.1" cy="461.1" r="1.6" fill="#ff00ff" stroke="none"/>
<circle cx="884.1" cy="461.1" r="1.6" fill="#ff00ff" stroke="none"/>
<circle cx="656.1" cy="96.1" r="1.6" fill="#ff00ff" stroke="none"/>
<circle cx="702.1" cy="165.1" r="1.6" fill="#ff00ff" stroke="none"/>
<circle cx="702.1" cy="180.1" r="1.6" fill="#ff00ff" stroke="none"/>
<circle cx="702.1" cy="195.1" r="1.6" fill="#ff00ff" stroke="none"/>
<circle cx="702.1" cy="210.1" r="1.6" fill="#ff00ff" stroke="none"/>
<circle cx="702.1" cy="225.1" r="1.6" fill="#ff00ff" stroke="none"/>
<circle cx="603.1" cy="180.1" r="1.6" fill="#ff00ff" stroke="none"/>
<circle cx="603.1" cy="195.1" r="1.6" fill="#ff00ff" stroke="none"/>
<circle cx="603.1" cy="210.1" r="1.6" fill="#ff00ff" stroke="none"/>
<circle cx="603.1" cy="225.1" r="1.6" fill="#ff00ff" stroke="none"/>
<circle cx="641.1" cy="332.1" r="1.6" fill="#ff00ff" stroke="none"/>
<circle cx="641.1" cy="347.1" r="1.6" fill="#ff00ff" stroke="none"/>
<circle cx="641.1" cy="362.1" r="1.6" fill="#ff00ff" stroke="none"/>
<circle cx="641.1" cy="377.1" r="1.6" fill="#ff00ff" stroke="none"/>
<circle cx="641.1" cy="393.1" r="1.6" fill="#ff00ff" stroke="none"/>
<circle cx="641.1" cy="408.1" r="1.6" fill="#ff00ff" stroke="none"/>
<circle cx="656.1" cy="446.1" r="1.6" fill="#ff00ff" stroke="none"/>
<circle cx="656.1" cy="491.1" r="1.6" fill="#ff00ff" stroke="none"/>
<circle cx="990.1" cy="58.1" r="1.6" fill="#ff00ff" stroke="none"/>
<circle cx="990.1" cy="111.1" r="1.6" fill="#ff00ff" stroke="none"/>
<circle cx="990.1" cy="119.1" r="1.6" fill="#ff00ff" stroke="none"/>
<circle cx="990.1" cy="165.1" r="1.6" fill="#ff00ff" stroke="none"/>
<circle cx="1150.1" cy="180.1" r="1.6" fill="#ff00ff" stroke="none"/>
<circle cx="1150.1" cy="241.1" r="1.6" fill="#ff00ff" stroke="none"/>
<circle cx="1150.1" cy="294.1" r="1.6" fill="#ff00ff" stroke="none"/>
<circle cx="1150.1" cy="339.1" r="1.6" fill="#ff00ff" stroke="none"/>
<circle cx="884.1" cy="248.1" r="1.6" fill="#ff00ff" stroke="none"/>
<circle cx="937.1" cy="248.1" r="1.6" fill="#ff00ff" stroke="none"/>
<circle cx="982.1" cy="248.1" r="1.6" fill="#ff00ff" stroke="none"/>
<circle cx="998.1" cy="248.1" r="1.6" fill="#ff00ff" stroke="none"/>
<circle cx="1028.1" cy="248.1" r="1.6" fill="#ff00ff" stroke="none"/>
<circle cx="983.1" cy="309.1" r="1.6" fill="#ff00ff" stroke="none"/>
<circle cx="998.1" cy="309.1" r="1.6" fill="#ff00ff" stroke="none"/>
</g>
</svg>
</body></html>
